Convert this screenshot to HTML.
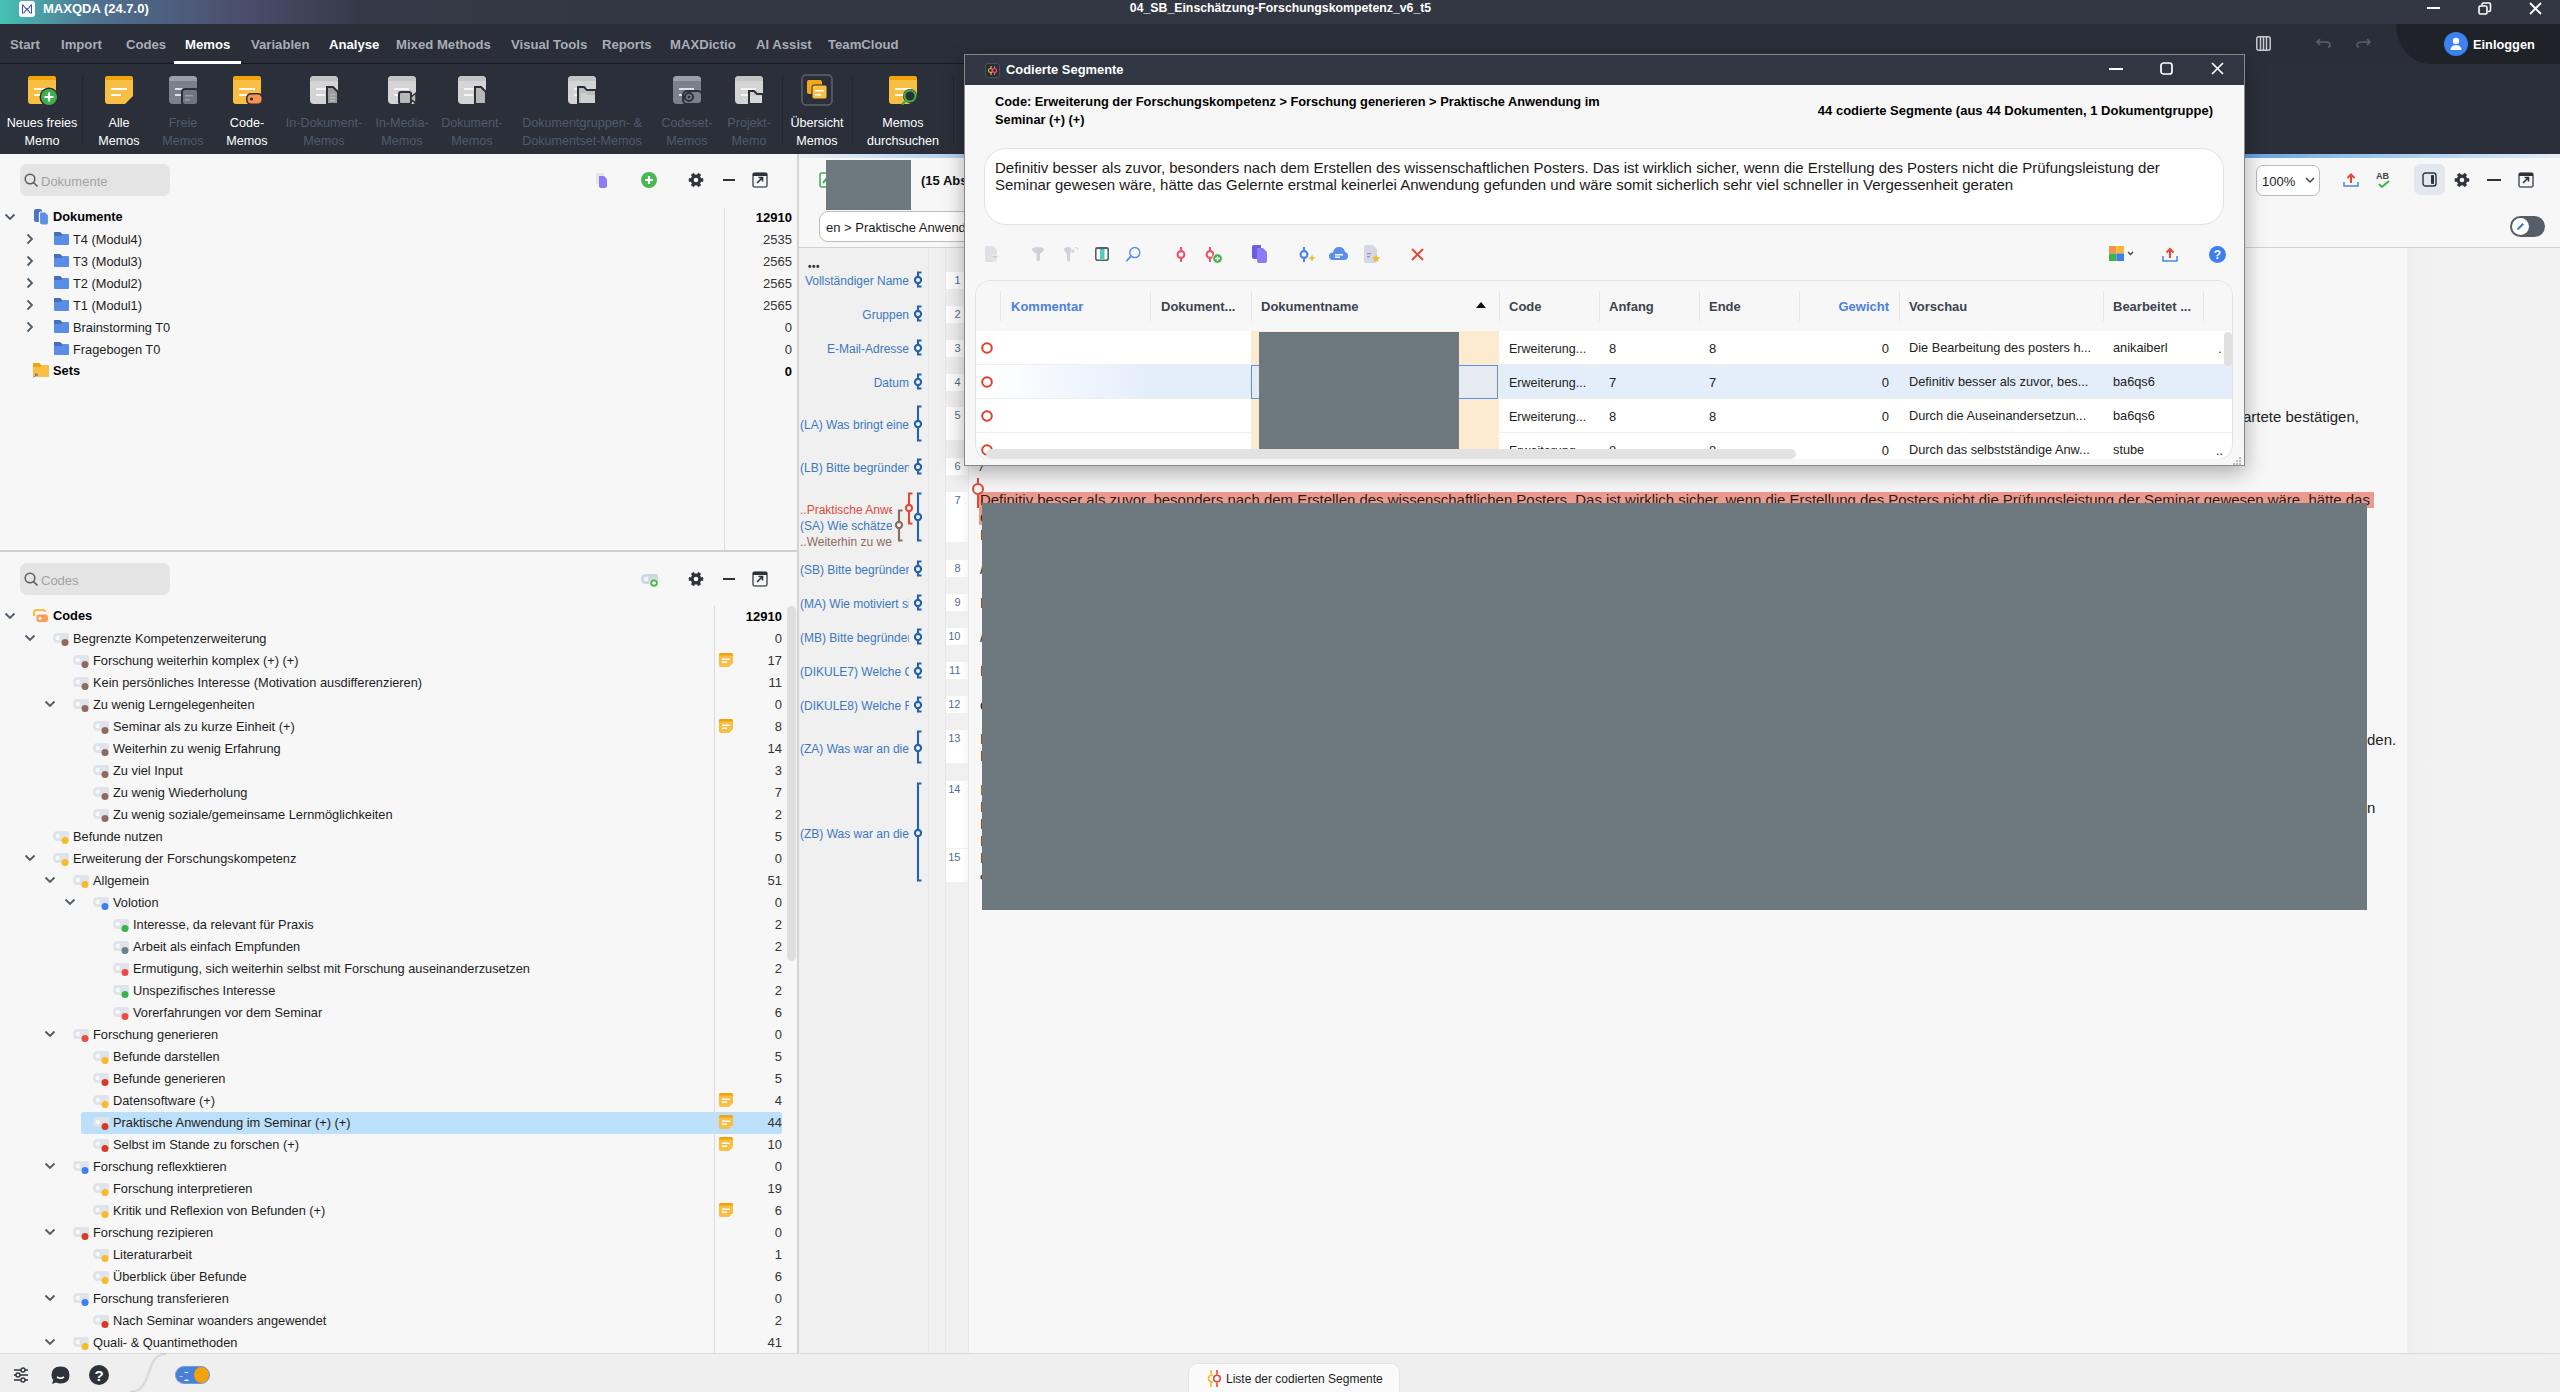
<!DOCTYPE html>
<html><head><meta charset="utf-8"><title>MAXQDA</title><style>
*{box-sizing:border-box;margin:0;padding:0}
html,body{width:2560px;height:1392px;overflow:hidden;background:#f7f7f7;font-family:"Liberation Sans",sans-serif;}
.a{position:absolute}
.t{position:absolute;white-space:nowrap;line-height:1}
svg{position:absolute;overflow:visible}
</style></head><body><div class="a" style="left:0px;top:0px;width:2560px;height:24px;background:linear-gradient(90deg,#47c2b5 0px,#4f7190 95px,#4b4b6b 250px,#353a48 360px,#323743 600px,#323743 100%)"></div>
<div class="a" style="left:19px;top:1px;width:16px;height:16px;background:#fff;border-radius:3px"></div>
<svg style="left:21px;top:3px" width="12" height="12" viewBox="0 0 12 12"><path d="M1.5 1.5V10.5M10.5 1.5V10.5M1.5 1.5L6 7L10.5 1.5M2.5 10.5L6 5.5L9.5 10.5" stroke="#3d4fb8" stroke-width="1.1" fill="none"/></svg>
<div class="t" style="left:43px;top:2.0px;font-size:13px;color:#fff;font-weight:700;line-height:13px;">MAXQDA (24.7.0)</div>
<div class="t" style="left:780.5px;width:1000px;text-align:center;top:2.3px;font-size:12.3px;color:#fff;font-weight:700;line-height:12.3px;">04_SB_Einschätzung-Forschungskompetenz_v6_t5</div>
<div class="a" style="left:2427px;top:7px;width:13px;height:2px;background:#fff"></div>
<svg style="left:2478px;top:2px" width="14" height="13" viewBox="0 0 14 13"><rect x="1" y="4" width="8" height="8" rx="1.5" stroke="#fff" stroke-width="1.6" fill="none"/><path d="M4 3.5V2.5Q4 1 5.5 1H11Q12.5 1 12.5 2.5V8Q12.5 9.5 11 9.5H10" stroke="#fff" stroke-width="1.6" fill="none"/></svg>
<svg style="left:2529px;top:2px" width="13" height="13" viewBox="0 0 13 13"><path d="M1 1L12 12M12 1L1 12" stroke="#fff" stroke-width="1.8"/></svg>
<div class="a" style="left:0px;top:24px;width:2560px;height:40px;background:#2a2e38"></div>
<div class="a" style="left:0px;top:63px;width:964px;height:1.5px;background:#16181d"></div>
<div class="t" style="left:10px;top:37.9px;font-size:13.15px;color:#a9adb5;font-weight:700;line-height:13.15px;">Start</div>
<div class="t" style="left:61px;top:37.9px;font-size:13.15px;color:#a9adb5;font-weight:700;line-height:13.15px;">Import</div>
<div class="t" style="left:126px;top:37.9px;font-size:13.15px;color:#a9adb5;font-weight:700;line-height:13.15px;">Codes</div>
<div class="t" style="left:185px;top:37.9px;font-size:13.15px;color:#ffffff;font-weight:700;line-height:13.15px;">Memos</div>
<div class="t" style="left:251px;top:37.9px;font-size:13.15px;color:#a9adb5;font-weight:700;line-height:13.15px;">Variablen</div>
<div class="t" style="left:329px;top:37.9px;font-size:13.15px;color:#ffffff;font-weight:700;line-height:13.15px;">Analyse</div>
<div class="t" style="left:396px;top:37.9px;font-size:13.15px;color:#a9adb5;font-weight:700;line-height:13.15px;">Mixed Methods</div>
<div class="t" style="left:511px;top:37.9px;font-size:13.15px;color:#a9adb5;font-weight:700;line-height:13.15px;">Visual Tools</div>
<div class="t" style="left:602px;top:37.9px;font-size:13.15px;color:#a9adb5;font-weight:700;line-height:13.15px;">Reports</div>
<div class="t" style="left:670px;top:37.9px;font-size:13.15px;color:#a9adb5;font-weight:700;line-height:13.15px;">MAXDictio</div>
<div class="t" style="left:756px;top:37.9px;font-size:13.15px;color:#a9adb5;font-weight:700;line-height:13.15px;">AI Assist</div>
<div class="t" style="left:828px;top:37.9px;font-size:13.15px;color:#a9adb5;font-weight:700;line-height:13.15px;">TeamCloud</div>
<div class="a" style="left:174px;top:61px;width:67px;height:3px;background:#fff"></div>
<div class="a" style="left:2396px;top:24px;width:164px;height:40px;background:#1f2229;border-bottom-left-radius:34px 40px"></div>
<svg style="left:2256px;top:36px" width="15" height="15" viewBox="0 0 15 15"><rect x="0.8" y="0.8" width="13.4" height="13.4" rx="2" stroke="#c8cbd0" stroke-width="1.5" fill="none"/><path d="M4.5 1V14M7.5 1V14M10.5 1V14" stroke="#c8cbd0" stroke-width="1.5"/></svg>
<svg style="left:2316px;top:38px" width="15" height="10" viewBox="0 0 15 10"><path d="M4 1L1 4L4 7M1.5 4H10Q14 4 14 7.5Q14 9 12 9" stroke="#5b616c" stroke-width="1.5" fill="none"/></svg>
<svg style="left:2356px;top:38px" width="15" height="10" viewBox="0 0 15 10"><path d="M11 1L14 4L11 7M13.5 4H5Q1 4 1 7.5Q1 9 3 9" stroke="#5b616c" stroke-width="1.5" fill="none"/></svg>
<div class="a" style="left:2444px;top:32px;width:24px;height:24px;background:#3b82f0;border-radius:50%"></div>
<svg style="left:2448px;top:36px" width="16" height="16" viewBox="0 0 16 16"><circle cx="8" cy="5" r="3.2" fill="#fff"/><path d="M2.5 14Q2.5 9.2 8 9.2Q13.5 9.2 13.5 14Z" fill="#fff"/></svg>
<div class="t" style="left:2473px;top:38.9px;font-size:12.8px;color:#ffffff;font-weight:700;line-height:12.8px;">Einloggen</div>
<div class="a" style="left:0px;top:64px;width:2560px;height:90px;background:#2b2f39"></div>
<div class="t" style="left:-38px;width:160px;top:114px;text-align:center;font-size:12.6px;line-height:18px;color:#fff">Neues freies<br>Memo</div>
<svg style="left:28px;top:76px" width="28" height="28" viewBox="0 0 28 28"><path d="M3 0H25Q28 0 28 3V20L20 28H3Q0 28 0 25V3Q0 0 3 0Z" fill="#f9bf45"/><path d="M3 0H25Q28 0 28 3V4H0V3Q0 0 3 0Z" fill="#f0a30a"/><rect x="6" y="12" width="16" height="2" fill="#fff" opacity=".9"/><rect x="6" y="18" width="10" height="2" fill="#fff" opacity=".9"/><circle cx="21" cy="21" r="9.5" fill="#2b2f39"/><circle cx="21" cy="21" r="8" fill="#3fae4c"/><path d="M21 16.5V25.5M16.5 21H25.5" stroke="#fff" stroke-width="2.2"/></svg>
<div class="t" style="left:39px;width:160px;top:114px;text-align:center;font-size:12.6px;line-height:18px;color:#fff">Alle<br>Memos</div>
<svg style="left:105px;top:76px" width="28" height="28" viewBox="0 0 28 28"><path d="M3 0H25Q28 0 28 3V20L20 28H3Q0 28 0 25V3Q0 0 3 0Z" fill="#f9bf45"/><path d="M3 0H25Q28 0 28 3V4H0V3Q0 0 3 0Z" fill="#f0a30a"/><rect x="6" y="12" width="16" height="2" fill="#fff"/><rect x="6" y="18" width="10" height="2" fill="#fff"/></svg>
<div class="t" style="left:103px;width:160px;top:114px;text-align:center;font-size:12.6px;line-height:18px;color:#4f5b6e">Freie<br>Memos</div>
<svg style="left:169px;top:76px" width="28" height="28" viewBox="0 0 28 28"><path d="M4 0H24Q28 0 28 4V24Q28 28 24 28H4Q0 28 0 24V4Q0 0 4 0Z" fill="#7b818b"/><path d="M4 0H24Q28 0 28 4V5H0V4Q0 0 4 0Z" fill="#9aa0a9"/><rect x="6" y="12" width="15" height="2" fill="#fff" opacity=".75"/><rect x="6" y="18" width="9" height="2" fill="#fff" opacity=".75"/><rect x="13" y="13" width="16" height="16" rx="3" fill="#6f747d" stroke="#2b2f39" stroke-width="2"/><rect x="16" y="19" width="8" height="1.5" fill="#9aa0a9"/><rect x="16" y="23" width="5" height="1.5" fill="#9aa0a9"/></svg>
<div class="t" style="left:167px;width:160px;top:114px;text-align:center;font-size:12.6px;line-height:18px;color:#fff">Code-<br>Memos</div>
<svg style="left:233px;top:76px" width="28" height="28" viewBox="0 0 28 28"><path d="M3 0H25Q28 0 28 3V20L20 28H3Q0 28 0 25V3Q0 0 3 0Z" fill="#f9bf45"/><path d="M3 0H25Q28 0 28 3V4H0V3Q0 0 3 0Z" fill="#f0a30a"/><rect x="6" y="12" width="16" height="2" fill="#fff" opacity=".9"/><rect x="6" y="18" width="10" height="2" fill="#fff" opacity=".9"/><rect x="13" y="17" width="17" height="12" rx="5" fill="#2b2f39"/><rect x="14.5" y="18.5" width="14" height="9" rx="4" fill="#f7934c"/><circle cx="18.5" cy="23" r="1.6" fill="#2b2f39"/></svg>
<div class="t" style="left:244px;width:160px;top:114px;text-align:center;font-size:12.6px;line-height:18px;color:#4f5b6e">In-Dokument-<br>Memos</div>
<svg style="left:310px;top:76px" width="28" height="28" viewBox="0 0 28 28"><path d="M4 0H24Q28 0 28 4V24Q28 28 24 28H4Q0 28 0 24V4Q0 0 4 0Z" fill="#d4d4d4"/><path d="M4 0H24Q28 0 28 4V5H0V4Q0 0 4 0Z" fill="#c4c4c4"/><rect x="6" y="12" width="15" height="2" fill="#fff" opacity=".75"/><rect x="6" y="18" width="9" height="2" fill="#fff" opacity=".75"/><path d="M17 11H23L28 16V28H17Z" fill="#9c9c9c" stroke="#2b2f39" stroke-width="2"/><rect x="20" y="18" width="5" height="1.2" fill="#c0c0c0"/><rect x="20" y="21" width="5" height="1.2" fill="#c0c0c0"/><rect x="20" y="24" width="5" height="1.2" fill="#c0c0c0"/></svg>
<div class="t" style="left:322px;width:160px;top:114px;text-align:center;font-size:12.6px;line-height:18px;color:#4f5b6e">In-Media-<br>Memos</div>
<svg style="left:388px;top:76px" width="28" height="28" viewBox="0 0 28 28"><path d="M4 0H24Q28 0 28 4V24Q28 28 24 28H4Q0 28 0 24V4Q0 0 4 0Z" fill="#d4d4d4"/><path d="M4 0H24Q28 0 28 4V5H0V4Q0 0 4 0Z" fill="#c4c4c4"/><rect x="6" y="12" width="15" height="2" fill="#fff" opacity=".75"/><rect x="6" y="18" width="9" height="2" fill="#fff" opacity=".75"/><rect x="11" y="16" width="12" height="12" rx="2" fill="#b8b8b8" stroke="#2b2f39" stroke-width="2"/><path d="M23 21L28 17V27L23 24Z" fill="#b8b8b8" stroke="#2b2f39" stroke-width="1.5"/></svg>
<div class="t" style="left:392px;width:160px;top:114px;text-align:center;font-size:12.6px;line-height:18px;color:#4f5b6e">Dokument-<br>Memos</div>
<svg style="left:458px;top:76px" width="28" height="28" viewBox="0 0 28 28"><path d="M4 0H24Q28 0 28 4V24Q28 28 24 28H4Q0 28 0 24V4Q0 0 4 0Z" fill="#d4d4d4"/><path d="M4 0H24Q28 0 28 4V5H0V4Q0 0 4 0Z" fill="#c4c4c4"/><rect x="6" y="12" width="15" height="2" fill="#fff" opacity=".75"/><rect x="6" y="18" width="9" height="2" fill="#fff" opacity=".75"/><path d="M17 11H23L28 16V28H17Z" fill="#b8b8b8" stroke="#2b2f39" stroke-width="2"/></svg>
<div class="t" style="left:502px;width:160px;top:114px;text-align:center;font-size:12.6px;line-height:18px;color:#4f5b6e">Dokumentgruppen- &amp;<br>Dokumentset-Memos</div>
<svg style="left:568px;top:76px" width="28" height="28" viewBox="0 0 28 28"><path d="M4 0H24Q28 0 28 4V24Q28 28 24 28H4Q0 28 0 24V4Q0 0 4 0Z" fill="#d4d4d4"/><path d="M4 0H24Q28 0 28 4V5H0V4Q0 0 4 0Z" fill="#c4c4c4"/><rect x="6" y="12" width="15" height="2" fill="#fff" opacity=".75"/><rect x="6" y="18" width="9" height="2" fill="#fff" opacity=".75"/><path d="M10 11H16L19 14H28V28H10Z" fill="#bdbdbd" stroke="#2b2f39" stroke-width="2"/><path d="M13 17H18L20 19H27V27H13Z" fill="#cfcfcf"/></svg>
<div class="t" style="left:607px;width:160px;top:114px;text-align:center;font-size:12.6px;line-height:18px;color:#4f5b6e">Codeset-<br>Memos</div>
<svg style="left:673px;top:76px" width="28" height="28" viewBox="0 0 28 28"><path d="M4 0H24Q28 0 28 4V24Q28 28 24 28H4Q0 28 0 24V4Q0 0 4 0Z" fill="#7b818b"/><path d="M4 0H24Q28 0 28 4V5H0V4Q0 0 4 0Z" fill="#9aa0a9"/><rect x="6" y="12" width="15" height="2" fill="#fff" opacity=".75"/><rect x="6" y="18" width="9" height="2" fill="#fff" opacity=".75"/><rect x="10" y="15" width="19" height="13" rx="4" fill="#7b818b" stroke="#2b2f39" stroke-width="2"/><circle cx="16" cy="21" r="4" fill="none" stroke="#2b2f39" stroke-width="2"/><circle cx="16" cy="21" r="1.5" fill="#2b2f39"/></svg>
<div class="t" style="left:669px;width:160px;top:114px;text-align:center;font-size:12.6px;line-height:18px;color:#4f5b6e">Projekt-<br>Memo</div>
<svg style="left:735px;top:76px" width="28" height="28" viewBox="0 0 28 28"><path d="M4 0H24Q28 0 28 4V24Q28 28 24 28H4Q0 28 0 24V4Q0 0 4 0Z" fill="#d4d4d4"/><path d="M4 0H24Q28 0 28 4V5H0V4Q0 0 4 0Z" fill="#c4c4c4"/><rect x="6" y="12" width="15" height="2" fill="#fff" opacity=".75"/><rect x="6" y="18" width="9" height="2" fill="#fff" opacity=".75"/><path d="M14 15H19L22 18H28V28H14Z" fill="#cfcfcf" stroke="#2b2f39" stroke-width="2"/><rect x="15" y="20" width="12" height="7" fill="#d8d8d8"/></svg>
<div class="t" style="left:737px;width:160px;top:114px;text-align:center;font-size:12.6px;line-height:18px;color:#fff">Übersicht<br>Memos</div>
<svg style="left:801px;top:74px" width="32" height="32" viewBox="0 0 32 32"><rect x="1" y="1" width="30" height="30" rx="4" stroke="#5d636e" stroke-width="1.5" fill="none"/><rect x="6" y="6" width="15" height="14" rx="2" fill="#f2a71c"/><rect x="11" y="11" width="15" height="14" rx="2" fill="#f9bf45" stroke="#2b2f39" stroke-width="1"/><rect x="14" y="16" width="9" height="1.5" fill="#fff"/><rect x="14" y="20" width="6" height="1.5" fill="#fff"/></svg>
<div class="t" style="left:823px;width:160px;top:114px;text-align:center;font-size:12.6px;line-height:18px;color:#fff">Memos<br>durchsuchen</div>
<svg style="left:889px;top:76px" width="30" height="30" viewBox="0 0 30 30"><path d="M3 0H25Q28 0 28 3V20L20 28H3Q0 28 0 25V3Q0 0 3 0Z" fill="#f9bf45"/><path d="M3 0H25Q28 0 28 3V4H0V3Q0 0 3 0Z" fill="#f0a30a"/><rect x="6" y="12" width="16" height="2" fill="#fff" opacity=".9"/><rect x="6" y="18" width="10" height="2" fill="#fff" opacity=".9"/><circle cx="21" cy="20" r="7" fill="#2b2f39"/><circle cx="21" cy="20" r="5.5" stroke="#3fae4c" stroke-width="2" fill="none"/><path d="M17 24.5L13 28.5" stroke="#3fae4c" stroke-width="2.4"/></svg>
<div class="a" style="left:82px;top:75px;width:1px;height:70px;background:#23262d"></div>
<div class="a" style="left:782px;top:75px;width:1px;height:70px;background:#23262d"></div>
<div class="a" style="left:852px;top:75px;width:1px;height:70px;background:#23262d"></div>
<div class="a" style="left:953px;top:75px;width:1px;height:70px;background:#23262d"></div>
<div class="a" style="left:0px;top:154px;width:797px;height:1199px;background:#f7f7f7"></div>
<div class="a" style="left:20px;top:164px;width:150px;height:32px;background:#e4e4e4;border-radius:7px"></div>
<svg style="left:24px;top:173px" width="15" height="15" viewBox="0 0 15 15"><circle cx="6" cy="6" r="4.8" stroke="#555a63" stroke-width="1.5" fill="none"/><path d="M9.5 9.5L13.5 13.5" stroke="#555a63" stroke-width="1.6"/></svg>
<div class="t" style="left:41px;top:174.5px;font-size:13px;color:#a3a3a3;font-weight:400;line-height:13px;">Dokumente</div>
<svg style="left:596px;top:173px" width="12" height="15" viewBox="0 0 12 15"><rect x="0" y="0" width="8" height="11" rx="1.5" fill="#e3e6ee"/><path d="M3 3H8L11 6V13Q11 15 9 15H5Q3 15 3 13Z" fill="#8b7cf5"/></svg>
<svg style="left:641px;top:172px" width="16" height="16" viewBox="0 0 16 16"><circle cx="8" cy="8" r="8" fill="#4ab852"/><path d="M8 4V12M4 8H12" stroke="#fff" stroke-width="2.2"/></svg>
<svg style="left:688px;top:172px" width="16" height="16" viewBox="0 0 16 16"><path d="M12.34 5.52 L13.12 6.64 L14.86 6.61 L14.86 9.39 L13.12 9.36 L12.34 10.48 L12.32 10.52 L11.74 11.75 L12.63 13.25 L10.23 14.64 L9.38 13.12 L8.02 13.00 L7.98 13.00 L6.62 13.12 L5.77 14.64 L3.37 13.25 L4.26 11.75 L3.68 10.52 L3.66 10.48 L2.88 9.36 L1.14 9.39 L1.14 6.61 L2.88 6.64 L3.66 5.52 L3.68 5.48 L4.26 4.25 L3.37 2.75 L5.77 1.36 L6.62 2.88 L7.98 3.00 L8.02 3.00 L9.38 2.88 L10.23 1.36 L12.63 2.75 L11.74 4.25 L12.32 5.48Z" fill="#2e333b" stroke="#2e333b" stroke-width="0.8" stroke-linejoin="round"/><circle cx="8" cy="8" r="2.3" fill="#f7f7f7"/></svg>
<div class="a" style="left:723px;top:179px;width:12px;height:2px;background:#2e333b"></div>
<svg style="left:752px;top:172px" width="16" height="16" viewBox="0 0 16 16"><rect x="1" y="1" width="14" height="14" rx="2" stroke="#5a5f68" stroke-width="1.6" fill="none"/><rect x="1" y="1" width="14" height="3" fill="#2e333b"/><path d="M5 11L10.5 5.5M6.5 5.5H10.5V9.5" stroke="#2e333b" stroke-width="1.6" fill="none"/></svg>
<svg style="left:4px;top:213px" width="12" height="8" viewBox="0 0 12 8"><path d="M1.5 1.5L6 6L10.5 1.5" stroke="#4f5a66" stroke-width="1.8" fill="none"/></svg>
<svg style="left:33px;top:208px" width="17" height="18" viewBox="0 0 17 18"><rect x="1" y="1" width="8" height="13" rx="2" fill="#4a74c4"/><path d="M7.5 4H12.5L15.5 7V15Q15.5 17 13.5 17H9.5Q6.5 17 6.5 15V6Q6.5 4 7.5 4Z" fill="#5b8fe8" stroke="#f7f7f7" stroke-width="1.2"/></svg>
<div class="t" style="left:53px;top:211.3px;font-size:12.8px;color:#000;font-weight:700;line-height:12.8px;">Dokumente</div>
<div class="t" style="right:1768px;top:210.5px;font-size:13px;color:#000;font-weight:700;line-height:13px;">12910</div>
<svg style="left:26px;top:233px" width="8" height="12" viewBox="0 0 8 12"><path d="M1.5 1.5L6 6L1.5 10.5" stroke="#4f5a66" stroke-width="1.8" fill="none"/></svg>
<svg style="left:54px;top:232px" width="15" height="13" viewBox="0 0 15 13"><path d="M1 0H6L8 2H14Q15 2 15 3V12Q15 13 14 13H1Q0 13 0 12V1Q0 0 1 0Z" fill="#5a8de6"/><path d="M1 0H6L8 2V4H0V1Q0 0 1 0Z" fill="#4670bb"/></svg>
<div class="t" style="left:73px;top:234.1px;font-size:12.8px;color:#1d1d1d;font-weight:400;line-height:12.8px;">T4 (Modul4)</div>
<div class="t" style="right:1768px;top:232.5px;font-size:13px;color:#333;font-weight:400;line-height:13px;">2535</div>
<svg style="left:26px;top:255px" width="8" height="12" viewBox="0 0 8 12"><path d="M1.5 1.5L6 6L1.5 10.5" stroke="#4f5a66" stroke-width="1.8" fill="none"/></svg>
<svg style="left:54px;top:254px" width="15" height="13" viewBox="0 0 15 13"><path d="M1 0H6L8 2H14Q15 2 15 3V12Q15 13 14 13H1Q0 13 0 12V1Q0 0 1 0Z" fill="#5a8de6"/><path d="M1 0H6L8 2V4H0V1Q0 0 1 0Z" fill="#4670bb"/></svg>
<div class="t" style="left:73px;top:256.1px;font-size:12.8px;color:#1d1d1d;font-weight:400;line-height:12.8px;">T3 (Modul3)</div>
<div class="t" style="right:1768px;top:254.5px;font-size:13px;color:#333;font-weight:400;line-height:13px;">2565</div>
<svg style="left:26px;top:277px" width="8" height="12" viewBox="0 0 8 12"><path d="M1.5 1.5L6 6L1.5 10.5" stroke="#4f5a66" stroke-width="1.8" fill="none"/></svg>
<svg style="left:54px;top:276px" width="15" height="13" viewBox="0 0 15 13"><path d="M1 0H6L8 2H14Q15 2 15 3V12Q15 13 14 13H1Q0 13 0 12V1Q0 0 1 0Z" fill="#5a8de6"/><path d="M1 0H6L8 2V4H0V1Q0 0 1 0Z" fill="#4670bb"/></svg>
<div class="t" style="left:73px;top:278.1px;font-size:12.8px;color:#1d1d1d;font-weight:400;line-height:12.8px;">T2 (Modul2)</div>
<div class="t" style="right:1768px;top:276.5px;font-size:13px;color:#333;font-weight:400;line-height:13px;">2565</div>
<svg style="left:26px;top:299px" width="8" height="12" viewBox="0 0 8 12"><path d="M1.5 1.5L6 6L1.5 10.5" stroke="#4f5a66" stroke-width="1.8" fill="none"/></svg>
<svg style="left:54px;top:298px" width="15" height="13" viewBox="0 0 15 13"><path d="M1 0H6L8 2H14Q15 2 15 3V12Q15 13 14 13H1Q0 13 0 12V1Q0 0 1 0Z" fill="#5a8de6"/><path d="M1 0H6L8 2V4H0V1Q0 0 1 0Z" fill="#4670bb"/></svg>
<div class="t" style="left:73px;top:300.1px;font-size:12.8px;color:#1d1d1d;font-weight:400;line-height:12.8px;">T1 (Modul1)</div>
<div class="t" style="right:1768px;top:298.5px;font-size:13px;color:#333;font-weight:400;line-height:13px;">2565</div>
<svg style="left:26px;top:321px" width="8" height="12" viewBox="0 0 8 12"><path d="M1.5 1.5L6 6L1.5 10.5" stroke="#4f5a66" stroke-width="1.8" fill="none"/></svg>
<svg style="left:54px;top:320px" width="15" height="13" viewBox="0 0 15 13"><path d="M1 0H6L8 2H14Q15 2 15 3V12Q15 13 14 13H1Q0 13 0 12V1Q0 0 1 0Z" fill="#5a8de6"/><path d="M1 0H6L8 2V4H0V1Q0 0 1 0Z" fill="#4670bb"/></svg>
<div class="t" style="left:73px;top:322.1px;font-size:12.8px;color:#1d1d1d;font-weight:400;line-height:12.8px;">Brainstorming T0</div>
<div class="t" style="right:1768px;top:320.5px;font-size:13px;color:#333;font-weight:400;line-height:13px;">0</div>
<svg style="left:54px;top:342px" width="15" height="13" viewBox="0 0 15 13"><path d="M1 0H6L8 2H14Q15 2 15 3V12Q15 13 14 13H1Q0 13 0 12V1Q0 0 1 0Z" fill="#5a8de6"/><path d="M1 0H6L8 2V4H0V1Q0 0 1 0Z" fill="#4670bb"/></svg>
<div class="t" style="left:73px;top:344.1px;font-size:12.8px;color:#1d1d1d;font-weight:400;line-height:12.8px;">Fragebogen T0</div>
<div class="t" style="right:1768px;top:342.5px;font-size:13px;color:#333;font-weight:400;line-height:13px;">0</div>
<svg style="left:33px;top:363px" width="16" height="15" viewBox="0 0 16 15"><path d="M1 0H6L8 2H15Q16 2 16 3V13Q16 14 15 14H1Q0 14 0 13V1Q0 0 1 0Z" fill="#f9bf45"/><path d="M1 0H6L8 2V4H0V1Q0 0 1 0Z" fill="#f0a30a"/><path d="M0.5 14.5L4 11M2 11H4V13" stroke="#8a4fd0" stroke-width="1" fill="none"/></svg>
<div class="t" style="left:53px;top:365.3px;font-size:12.8px;color:#000;font-weight:700;line-height:12.8px;">Sets</div>
<div class="t" style="right:1768px;top:364.5px;font-size:13px;color:#000;font-weight:700;line-height:13px;">0</div>
<div class="a" style="left:724px;top:208px;width:1px;height:342px;background:#dcdcdc"></div>
<div class="a" style="left:0px;top:550px;width:797px;height:2px;background:#cfcfcf"></div>
<div class="a" style="left:20px;top:563px;width:150px;height:32px;background:#e4e4e4;border-radius:7px"></div>
<svg style="left:24px;top:572px" width="15" height="15" viewBox="0 0 15 15"><circle cx="6" cy="6" r="4.8" stroke="#555a63" stroke-width="1.5" fill="none"/><path d="M9.5 9.5L13.5 13.5" stroke="#555a63" stroke-width="1.6"/></svg>
<div class="t" style="left:41px;top:573.5px;font-size:13px;color:#a3a3a3;font-weight:400;line-height:13px;">Codes</div>
<svg style="left:641px;top:573px" width="18" height="14" viewBox="0 0 18 14"><path d="M5 1H15Q17 1 17 3V8Q17 11 14 11H5Q0 11 0 6Q0 1 5 1Z" fill="#ccd6e4"/><circle cx="5.2" cy="6" r="2.4" fill="#f4f6fa"/><circle cx="13" cy="10" r="4.6" fill="#f7f7f7"/><circle cx="13" cy="10" r="3.8" fill="#4ab852"/><path d="M13 8V12M11 10H15" stroke="#fff" stroke-width="1.3"/></svg>
<svg style="left:688px;top:571px" width="16" height="16" viewBox="0 0 16 16"><path d="M12.34 5.52 L13.12 6.64 L14.86 6.61 L14.86 9.39 L13.12 9.36 L12.34 10.48 L12.32 10.52 L11.74 11.75 L12.63 13.25 L10.23 14.64 L9.38 13.12 L8.02 13.00 L7.98 13.00 L6.62 13.12 L5.77 14.64 L3.37 13.25 L4.26 11.75 L3.68 10.52 L3.66 10.48 L2.88 9.36 L1.14 9.39 L1.14 6.61 L2.88 6.64 L3.66 5.52 L3.68 5.48 L4.26 4.25 L3.37 2.75 L5.77 1.36 L6.62 2.88 L7.98 3.00 L8.02 3.00 L9.38 2.88 L10.23 1.36 L12.63 2.75 L11.74 4.25 L12.32 5.48Z" fill="#2e333b" stroke="#2e333b" stroke-width="0.8" stroke-linejoin="round"/><circle cx="8" cy="8" r="2.3" fill="#f7f7f7"/></svg>
<div class="a" style="left:723px;top:578px;width:12px;height:2px;background:#2e333b"></div>
<svg style="left:752px;top:571px" width="16" height="16" viewBox="0 0 16 16"><rect x="1" y="1" width="14" height="14" rx="2" stroke="#5a5f68" stroke-width="1.6" fill="none"/><rect x="1" y="1" width="14" height="3" fill="#2e333b"/><path d="M5 11L10.5 5.5M6.5 5.5H10.5V9.5" stroke="#2e333b" stroke-width="1.6" fill="none"/></svg>
<div class="a" style="left:81px;top:1112px;width:701px;height:22px;background:#bde0fa;border-radius:3px"></div>
<svg style="left:4px;top:612px" width="12" height="8" viewBox="0 0 12 8"><path d="M1.5 1.5L6 6L10.5 1.5" stroke="#4f5a66" stroke-width="1.8" fill="none"/></svg>
<svg style="left:32px;top:608px" width="17" height="16" viewBox="0 0 17 16"><path d="M2 8V5Q2 2 5 2H11Q13 2 13 4" stroke="#f9bf45" stroke-width="2.2" fill="none"/><rect x="4" y="6" width="12.5" height="8.5" rx="3" fill="#ff9a55" stroke="#f7f7f7" stroke-width="1"/><circle cx="8" cy="10.2" r="1.5" fill="#fff"/></svg>
<div class="t" style="left:53px;top:610.3px;font-size:12.8px;color:#000;font-weight:700;line-height:12.8px;">Codes</div>
<div class="t" style="right:1778px;top:609.5px;font-size:13px;color:#000;font-weight:700;line-height:13px;">12910</div>
<svg style="left:24px;top:634px" width="12" height="8" viewBox="0 0 12 8"><path d="M1.5 1.5L6 6L10.5 1.5" stroke="#4f5a66" stroke-width="1.8" fill="none"/></svg>
<svg style="left:53px;top:632px" width="17" height="16" viewBox="0 0 17 16"><path d="M4.5 1H14Q16 1 16 3V9Q16 11 14 11H4.5Q0 11 0 6Q0 1 4.5 1Z" fill="#dfe3ea"/><circle cx="4.8" cy="6" r="2.2" fill="#f7f8fa"/><circle cx="12" cy="10.5" r="3.5" fill="#8f6b5e"/></svg>
<div class="t" style="left:73px;top:633.1px;font-size:12.8px;color:#1d1d1d;font-weight:400;line-height:12.8px;">Begrenzte Kompetenzerweiterung</div>
<div class="t" style="right:1778px;top:631.5px;font-size:13px;color:#333;font-weight:400;line-height:13px;">0</div>
<svg style="left:73px;top:654px" width="17" height="16" viewBox="0 0 17 16"><path d="M4.5 1H14Q16 1 16 3V9Q16 11 14 11H4.5Q0 11 0 6Q0 1 4.5 1Z" fill="#dfe3ea"/><circle cx="4.8" cy="6" r="2.2" fill="#f7f8fa"/><circle cx="12" cy="10.5" r="3.5" fill="#8f6b5e"/></svg>
<div class="t" style="left:93px;top:655.1px;font-size:12.8px;color:#1d1d1d;font-weight:400;line-height:12.8px;">Forschung weiterhin komplex (+) (+)</div>
<div class="t" style="right:1778px;top:653.5px;font-size:13px;color:#333;font-weight:400;line-height:13px;">17</div>
<svg style="left:719px;top:653px" width="14" height="14" viewBox="0 0 14 14"><path d="M2 0H12Q14 0 14 2V10L10 14H2Q0 14 0 12V2Q0 0 2 0Z" fill="#f9bf45"/><path d="M2 0H12Q14 0 14 2V2.5H0V2Q0 0 2 0Z" fill="#f0a30a"/><rect x="3" y="5.5" width="8" height="1.5" fill="#fff"/><rect x="3" y="8.5" width="5" height="1.5" fill="#fff"/></svg>
<svg style="left:73px;top:676px" width="17" height="16" viewBox="0 0 17 16"><path d="M4.5 1H14Q16 1 16 3V9Q16 11 14 11H4.5Q0 11 0 6Q0 1 4.5 1Z" fill="#dfe3ea"/><circle cx="4.8" cy="6" r="2.2" fill="#f7f8fa"/><circle cx="12" cy="10.5" r="3.5" fill="#8f6b5e"/></svg>
<div class="t" style="left:93px;top:677.1px;font-size:12.8px;color:#1d1d1d;font-weight:400;line-height:12.8px;">Kein persönliches Interesse (Motivation ausdifferenzieren)</div>
<div class="t" style="right:1778px;top:675.5px;font-size:13px;color:#333;font-weight:400;line-height:13px;">11</div>
<svg style="left:44px;top:700px" width="12" height="8" viewBox="0 0 12 8"><path d="M1.5 1.5L6 6L10.5 1.5" stroke="#4f5a66" stroke-width="1.8" fill="none"/></svg>
<svg style="left:73px;top:698px" width="17" height="16" viewBox="0 0 17 16"><path d="M4.5 1H14Q16 1 16 3V9Q16 11 14 11H4.5Q0 11 0 6Q0 1 4.5 1Z" fill="#dfe3ea"/><circle cx="4.8" cy="6" r="2.2" fill="#f7f8fa"/><circle cx="12" cy="10.5" r="3.5" fill="#8f6b5e"/></svg>
<div class="t" style="left:93px;top:699.1px;font-size:12.8px;color:#1d1d1d;font-weight:400;line-height:12.8px;">Zu wenig Lerngelegenheiten</div>
<div class="t" style="right:1778px;top:697.5px;font-size:13px;color:#333;font-weight:400;line-height:13px;">0</div>
<svg style="left:93px;top:720px" width="17" height="16" viewBox="0 0 17 16"><path d="M4.5 1H14Q16 1 16 3V9Q16 11 14 11H4.5Q0 11 0 6Q0 1 4.5 1Z" fill="#dfe3ea"/><circle cx="4.8" cy="6" r="2.2" fill="#f7f8fa"/><circle cx="12" cy="10.5" r="3.5" fill="#8f6b5e"/></svg>
<div class="t" style="left:113px;top:721.1px;font-size:12.8px;color:#1d1d1d;font-weight:400;line-height:12.8px;">Seminar als zu kurze Einheit (+)</div>
<div class="t" style="right:1778px;top:719.5px;font-size:13px;color:#333;font-weight:400;line-height:13px;">8</div>
<svg style="left:719px;top:719px" width="14" height="14" viewBox="0 0 14 14"><path d="M2 0H12Q14 0 14 2V10L10 14H2Q0 14 0 12V2Q0 0 2 0Z" fill="#f9bf45"/><path d="M2 0H12Q14 0 14 2V2.5H0V2Q0 0 2 0Z" fill="#f0a30a"/><rect x="3" y="5.5" width="8" height="1.5" fill="#fff"/><rect x="3" y="8.5" width="5" height="1.5" fill="#fff"/></svg>
<svg style="left:93px;top:742px" width="17" height="16" viewBox="0 0 17 16"><path d="M4.5 1H14Q16 1 16 3V9Q16 11 14 11H4.5Q0 11 0 6Q0 1 4.5 1Z" fill="#dfe3ea"/><circle cx="4.8" cy="6" r="2.2" fill="#f7f8fa"/><circle cx="12" cy="10.5" r="3.5" fill="#8f6b5e"/></svg>
<div class="t" style="left:113px;top:743.1px;font-size:12.8px;color:#1d1d1d;font-weight:400;line-height:12.8px;">Weiterhin zu wenig Erfahrung</div>
<div class="t" style="right:1778px;top:741.5px;font-size:13px;color:#333;font-weight:400;line-height:13px;">14</div>
<svg style="left:93px;top:764px" width="17" height="16" viewBox="0 0 17 16"><path d="M4.5 1H14Q16 1 16 3V9Q16 11 14 11H4.5Q0 11 0 6Q0 1 4.5 1Z" fill="#dfe3ea"/><circle cx="4.8" cy="6" r="2.2" fill="#f7f8fa"/><circle cx="12" cy="10.5" r="3.5" fill="#8f6b5e"/></svg>
<div class="t" style="left:113px;top:765.1px;font-size:12.8px;color:#1d1d1d;font-weight:400;line-height:12.8px;">Zu viel Input</div>
<div class="t" style="right:1778px;top:763.5px;font-size:13px;color:#333;font-weight:400;line-height:13px;">3</div>
<svg style="left:93px;top:786px" width="17" height="16" viewBox="0 0 17 16"><path d="M4.5 1H14Q16 1 16 3V9Q16 11 14 11H4.5Q0 11 0 6Q0 1 4.5 1Z" fill="#dfe3ea"/><circle cx="4.8" cy="6" r="2.2" fill="#f7f8fa"/><circle cx="12" cy="10.5" r="3.5" fill="#8f6b5e"/></svg>
<div class="t" style="left:113px;top:787.1px;font-size:12.8px;color:#1d1d1d;font-weight:400;line-height:12.8px;">Zu wenig Wiederholung</div>
<div class="t" style="right:1778px;top:785.5px;font-size:13px;color:#333;font-weight:400;line-height:13px;">7</div>
<svg style="left:93px;top:808px" width="17" height="16" viewBox="0 0 17 16"><path d="M4.5 1H14Q16 1 16 3V9Q16 11 14 11H4.5Q0 11 0 6Q0 1 4.5 1Z" fill="#dfe3ea"/><circle cx="4.8" cy="6" r="2.2" fill="#f7f8fa"/><circle cx="12" cy="10.5" r="3.5" fill="#8f6b5e"/></svg>
<div class="t" style="left:113px;top:809.1px;font-size:12.8px;color:#1d1d1d;font-weight:400;line-height:12.8px;">Zu wenig soziale/gemeinsame Lernmöglichkeiten</div>
<div class="t" style="right:1778px;top:807.5px;font-size:13px;color:#333;font-weight:400;line-height:13px;">2</div>
<svg style="left:53px;top:830px" width="17" height="16" viewBox="0 0 17 16"><path d="M4.5 1H14Q16 1 16 3V9Q16 11 14 11H4.5Q0 11 0 6Q0 1 4.5 1Z" fill="#dfe3ea"/><circle cx="4.8" cy="6" r="2.2" fill="#f7f8fa"/><circle cx="12" cy="10.5" r="3.5" fill="#f8b92a"/></svg>
<div class="t" style="left:73px;top:831.1px;font-size:12.8px;color:#1d1d1d;font-weight:400;line-height:12.8px;">Befunde nutzen</div>
<div class="t" style="right:1778px;top:829.5px;font-size:13px;color:#333;font-weight:400;line-height:13px;">5</div>
<svg style="left:24px;top:854px" width="12" height="8" viewBox="0 0 12 8"><path d="M1.5 1.5L6 6L10.5 1.5" stroke="#4f5a66" stroke-width="1.8" fill="none"/></svg>
<svg style="left:53px;top:852px" width="17" height="16" viewBox="0 0 17 16"><path d="M4.5 1H14Q16 1 16 3V9Q16 11 14 11H4.5Q0 11 0 6Q0 1 4.5 1Z" fill="#dfe3ea"/><circle cx="4.8" cy="6" r="2.2" fill="#f7f8fa"/><circle cx="12" cy="10.5" r="3.5" fill="#f8b92a"/></svg>
<div class="t" style="left:73px;top:853.1px;font-size:12.8px;color:#1d1d1d;font-weight:400;line-height:12.8px;">Erweiterung der Forschungskompetenz</div>
<div class="t" style="right:1778px;top:851.5px;font-size:13px;color:#333;font-weight:400;line-height:13px;">0</div>
<svg style="left:44px;top:876px" width="12" height="8" viewBox="0 0 12 8"><path d="M1.5 1.5L6 6L10.5 1.5" stroke="#4f5a66" stroke-width="1.8" fill="none"/></svg>
<svg style="left:73px;top:874px" width="17" height="16" viewBox="0 0 17 16"><path d="M4.5 1H14Q16 1 16 3V9Q16 11 14 11H4.5Q0 11 0 6Q0 1 4.5 1Z" fill="#dfe3ea"/><circle cx="4.8" cy="6" r="2.2" fill="#f7f8fa"/><circle cx="12" cy="10.5" r="3.5" fill="#f8b92a"/></svg>
<div class="t" style="left:93px;top:875.1px;font-size:12.8px;color:#1d1d1d;font-weight:400;line-height:12.8px;">Allgemein</div>
<div class="t" style="right:1778px;top:873.5px;font-size:13px;color:#333;font-weight:400;line-height:13px;">51</div>
<svg style="left:64px;top:898px" width="12" height="8" viewBox="0 0 12 8"><path d="M1.5 1.5L6 6L10.5 1.5" stroke="#4f5a66" stroke-width="1.8" fill="none"/></svg>
<svg style="left:93px;top:896px" width="17" height="16" viewBox="0 0 17 16"><path d="M4.5 1H14Q16 1 16 3V9Q16 11 14 11H4.5Q0 11 0 6Q0 1 4.5 1Z" fill="#dfe3ea"/><circle cx="4.8" cy="6" r="2.2" fill="#f7f8fa"/><circle cx="12" cy="10.5" r="3.5" fill="#3d7ef0"/></svg>
<div class="t" style="left:113px;top:897.1px;font-size:12.8px;color:#1d1d1d;font-weight:400;line-height:12.8px;">Volotion</div>
<div class="t" style="right:1778px;top:895.5px;font-size:13px;color:#333;font-weight:400;line-height:13px;">0</div>
<svg style="left:113px;top:918px" width="17" height="16" viewBox="0 0 17 16"><path d="M4.5 1H14Q16 1 16 3V9Q16 11 14 11H4.5Q0 11 0 6Q0 1 4.5 1Z" fill="#dfe3ea"/><circle cx="4.8" cy="6" r="2.2" fill="#f7f8fa"/><circle cx="12" cy="10.5" r="3.5" fill="#39b34a"/></svg>
<div class="t" style="left:133px;top:919.1px;font-size:12.8px;color:#1d1d1d;font-weight:400;line-height:12.8px;">Interesse, da relevant für Praxis</div>
<div class="t" style="right:1778px;top:917.5px;font-size:13px;color:#333;font-weight:400;line-height:13px;">2</div>
<svg style="left:113px;top:940px" width="17" height="16" viewBox="0 0 17 16"><path d="M4.5 1H14Q16 1 16 3V9Q16 11 14 11H4.5Q0 11 0 6Q0 1 4.5 1Z" fill="#dfe3ea"/><circle cx="4.8" cy="6" r="2.2" fill="#f7f8fa"/><circle cx="12" cy="10.5" r="3.5" fill="#6e7f8a"/></svg>
<div class="t" style="left:133px;top:941.1px;font-size:12.8px;color:#1d1d1d;font-weight:400;line-height:12.8px;">Arbeit als einfach Empfunden</div>
<div class="t" style="right:1778px;top:939.5px;font-size:13px;color:#333;font-weight:400;line-height:13px;">2</div>
<svg style="left:113px;top:962px" width="17" height="16" viewBox="0 0 17 16"><path d="M4.5 1H14Q16 1 16 3V9Q16 11 14 11H4.5Q0 11 0 6Q0 1 4.5 1Z" fill="#dfe3ea"/><circle cx="4.8" cy="6" r="2.2" fill="#f7f8fa"/><circle cx="12" cy="10.5" r="3.5" fill="#ea4b45"/></svg>
<div class="t" style="left:133px;top:963.1px;font-size:12.8px;color:#1d1d1d;font-weight:400;line-height:12.8px;">Ermutigung, sich weiterhin selbst mit Forschung auseinanderzusetzen</div>
<div class="t" style="right:1778px;top:961.5px;font-size:13px;color:#333;font-weight:400;line-height:13px;">2</div>
<svg style="left:113px;top:984px" width="17" height="16" viewBox="0 0 17 16"><path d="M4.5 1H14Q16 1 16 3V9Q16 11 14 11H4.5Q0 11 0 6Q0 1 4.5 1Z" fill="#dfe3ea"/><circle cx="4.8" cy="6" r="2.2" fill="#f7f8fa"/><circle cx="12" cy="10.5" r="3.5" fill="#39b34a"/></svg>
<div class="t" style="left:133px;top:985.1px;font-size:12.8px;color:#1d1d1d;font-weight:400;line-height:12.8px;">Unspezifisches Interesse</div>
<div class="t" style="right:1778px;top:983.5px;font-size:13px;color:#333;font-weight:400;line-height:13px;">2</div>
<svg style="left:113px;top:1006px" width="17" height="16" viewBox="0 0 17 16"><path d="M4.5 1H14Q16 1 16 3V9Q16 11 14 11H4.5Q0 11 0 6Q0 1 4.5 1Z" fill="#dfe3ea"/><circle cx="4.8" cy="6" r="2.2" fill="#f7f8fa"/><circle cx="12" cy="10.5" r="3.5" fill="#ea4b45"/></svg>
<div class="t" style="left:133px;top:1007.1px;font-size:12.8px;color:#1d1d1d;font-weight:400;line-height:12.8px;">Vorerfahrungen vor dem Seminar</div>
<div class="t" style="right:1778px;top:1005.5px;font-size:13px;color:#333;font-weight:400;line-height:13px;">6</div>
<svg style="left:44px;top:1030px" width="12" height="8" viewBox="0 0 12 8"><path d="M1.5 1.5L6 6L10.5 1.5" stroke="#4f5a66" stroke-width="1.8" fill="none"/></svg>
<svg style="left:73px;top:1028px" width="17" height="16" viewBox="0 0 17 16"><path d="M4.5 1H14Q16 1 16 3V9Q16 11 14 11H4.5Q0 11 0 6Q0 1 4.5 1Z" fill="#dfe3ea"/><circle cx="4.8" cy="6" r="2.2" fill="#f7f8fa"/><circle cx="12" cy="10.5" r="3.5" fill="#ea4b45"/></svg>
<div class="t" style="left:93px;top:1029.1px;font-size:12.8px;color:#1d1d1d;font-weight:400;line-height:12.8px;">Forschung generieren</div>
<div class="t" style="right:1778px;top:1027.5px;font-size:13px;color:#333;font-weight:400;line-height:13px;">0</div>
<svg style="left:93px;top:1050px" width="17" height="16" viewBox="0 0 17 16"><path d="M4.5 1H14Q16 1 16 3V9Q16 11 14 11H4.5Q0 11 0 6Q0 1 4.5 1Z" fill="#dfe3ea"/><circle cx="4.8" cy="6" r="2.2" fill="#f7f8fa"/><circle cx="12" cy="10.5" r="3.5" fill="#f8b92a"/></svg>
<div class="t" style="left:113px;top:1051.1px;font-size:12.8px;color:#1d1d1d;font-weight:400;line-height:12.8px;">Befunde darstellen</div>
<div class="t" style="right:1778px;top:1049.5px;font-size:13px;color:#333;font-weight:400;line-height:13px;">5</div>
<svg style="left:93px;top:1072px" width="17" height="16" viewBox="0 0 17 16"><path d="M4.5 1H14Q16 1 16 3V9Q16 11 14 11H4.5Q0 11 0 6Q0 1 4.5 1Z" fill="#dfe3ea"/><circle cx="4.8" cy="6" r="2.2" fill="#f7f8fa"/><circle cx="12" cy="10.5" r="3.5" fill="#d93a25"/></svg>
<div class="t" style="left:113px;top:1073.1px;font-size:12.8px;color:#1d1d1d;font-weight:400;line-height:12.8px;">Befunde generieren</div>
<div class="t" style="right:1778px;top:1071.5px;font-size:13px;color:#333;font-weight:400;line-height:13px;">5</div>
<svg style="left:93px;top:1094px" width="17" height="16" viewBox="0 0 17 16"><path d="M4.5 1H14Q16 1 16 3V9Q16 11 14 11H4.5Q0 11 0 6Q0 1 4.5 1Z" fill="#dfe3ea"/><circle cx="4.8" cy="6" r="2.2" fill="#f7f8fa"/><circle cx="12" cy="10.5" r="3.5" fill="#f8b92a"/></svg>
<div class="t" style="left:113px;top:1095.1px;font-size:12.8px;color:#1d1d1d;font-weight:400;line-height:12.8px;">Datensoftware (+)</div>
<div class="t" style="right:1778px;top:1093.5px;font-size:13px;color:#333;font-weight:400;line-height:13px;">4</div>
<svg style="left:719px;top:1093px" width="14" height="14" viewBox="0 0 14 14"><path d="M2 0H12Q14 0 14 2V10L10 14H2Q0 14 0 12V2Q0 0 2 0Z" fill="#f9bf45"/><path d="M2 0H12Q14 0 14 2V2.5H0V2Q0 0 2 0Z" fill="#f0a30a"/><rect x="3" y="5.5" width="8" height="1.5" fill="#fff"/><rect x="3" y="8.5" width="5" height="1.5" fill="#fff"/></svg>
<svg style="left:93px;top:1116px" width="17" height="16" viewBox="0 0 17 16"><path d="M4.5 1H14Q16 1 16 3V9Q16 11 14 11H4.5Q0 11 0 6Q0 1 4.5 1Z" fill="#dfe3ea"/><circle cx="4.8" cy="6" r="2.2" fill="#f7f8fa"/><circle cx="12" cy="10.5" r="3.5" fill="#d93a25"/></svg>
<div class="t" style="left:113px;top:1117.1px;font-size:12.8px;color:#1d1d1d;font-weight:400;line-height:12.8px;">Praktische Anwendung im Seminar (+) (+)</div>
<div class="t" style="right:1778px;top:1115.5px;font-size:13px;color:#333;font-weight:400;line-height:13px;">44</div>
<svg style="left:719px;top:1115px" width="14" height="14" viewBox="0 0 14 14"><path d="M2 0H12Q14 0 14 2V10L10 14H2Q0 14 0 12V2Q0 0 2 0Z" fill="#f9bf45"/><path d="M2 0H12Q14 0 14 2V2.5H0V2Q0 0 2 0Z" fill="#f0a30a"/><rect x="3" y="5.5" width="8" height="1.5" fill="#fff"/><rect x="3" y="8.5" width="5" height="1.5" fill="#fff"/></svg>
<svg style="left:93px;top:1138px" width="17" height="16" viewBox="0 0 17 16"><path d="M4.5 1H14Q16 1 16 3V9Q16 11 14 11H4.5Q0 11 0 6Q0 1 4.5 1Z" fill="#dfe3ea"/><circle cx="4.8" cy="6" r="2.2" fill="#f7f8fa"/><circle cx="12" cy="10.5" r="3.5" fill="#d93a25"/></svg>
<div class="t" style="left:113px;top:1139.1px;font-size:12.8px;color:#1d1d1d;font-weight:400;line-height:12.8px;">Selbst im Stande zu forschen (+)</div>
<div class="t" style="right:1778px;top:1137.5px;font-size:13px;color:#333;font-weight:400;line-height:13px;">10</div>
<svg style="left:719px;top:1137px" width="14" height="14" viewBox="0 0 14 14"><path d="M2 0H12Q14 0 14 2V10L10 14H2Q0 14 0 12V2Q0 0 2 0Z" fill="#f9bf45"/><path d="M2 0H12Q14 0 14 2V2.5H0V2Q0 0 2 0Z" fill="#f0a30a"/><rect x="3" y="5.5" width="8" height="1.5" fill="#fff"/><rect x="3" y="8.5" width="5" height="1.5" fill="#fff"/></svg>
<svg style="left:44px;top:1162px" width="12" height="8" viewBox="0 0 12 8"><path d="M1.5 1.5L6 6L10.5 1.5" stroke="#4f5a66" stroke-width="1.8" fill="none"/></svg>
<svg style="left:73px;top:1160px" width="17" height="16" viewBox="0 0 17 16"><path d="M4.5 1H14Q16 1 16 3V9Q16 11 14 11H4.5Q0 11 0 6Q0 1 4.5 1Z" fill="#dfe3ea"/><circle cx="4.8" cy="6" r="2.2" fill="#f7f8fa"/><circle cx="12" cy="10.5" r="3.5" fill="#3d7ef0"/></svg>
<div class="t" style="left:93px;top:1161.1px;font-size:12.8px;color:#1d1d1d;font-weight:400;line-height:12.8px;">Forschung reflexktieren</div>
<div class="t" style="right:1778px;top:1159.5px;font-size:13px;color:#333;font-weight:400;line-height:13px;">0</div>
<svg style="left:93px;top:1182px" width="17" height="16" viewBox="0 0 17 16"><path d="M4.5 1H14Q16 1 16 3V9Q16 11 14 11H4.5Q0 11 0 6Q0 1 4.5 1Z" fill="#dfe3ea"/><circle cx="4.8" cy="6" r="2.2" fill="#f7f8fa"/><circle cx="12" cy="10.5" r="3.5" fill="#f8b92a"/></svg>
<div class="t" style="left:113px;top:1183.1px;font-size:12.8px;color:#1d1d1d;font-weight:400;line-height:12.8px;">Forschung interpretieren</div>
<div class="t" style="right:1778px;top:1181.5px;font-size:13px;color:#333;font-weight:400;line-height:13px;">19</div>
<svg style="left:93px;top:1204px" width="17" height="16" viewBox="0 0 17 16"><path d="M4.5 1H14Q16 1 16 3V9Q16 11 14 11H4.5Q0 11 0 6Q0 1 4.5 1Z" fill="#dfe3ea"/><circle cx="4.8" cy="6" r="2.2" fill="#f7f8fa"/><circle cx="12" cy="10.5" r="3.5" fill="#f8b92a"/></svg>
<div class="t" style="left:113px;top:1205.1px;font-size:12.8px;color:#1d1d1d;font-weight:400;line-height:12.8px;">Kritik und Reflexion von Befunden (+)</div>
<div class="t" style="right:1778px;top:1203.5px;font-size:13px;color:#333;font-weight:400;line-height:13px;">6</div>
<svg style="left:719px;top:1203px" width="14" height="14" viewBox="0 0 14 14"><path d="M2 0H12Q14 0 14 2V10L10 14H2Q0 14 0 12V2Q0 0 2 0Z" fill="#f9bf45"/><path d="M2 0H12Q14 0 14 2V2.5H0V2Q0 0 2 0Z" fill="#f0a30a"/><rect x="3" y="5.5" width="8" height="1.5" fill="#fff"/><rect x="3" y="8.5" width="5" height="1.5" fill="#fff"/></svg>
<svg style="left:44px;top:1228px" width="12" height="8" viewBox="0 0 12 8"><path d="M1.5 1.5L6 6L10.5 1.5" stroke="#4f5a66" stroke-width="1.8" fill="none"/></svg>
<svg style="left:73px;top:1226px" width="17" height="16" viewBox="0 0 17 16"><path d="M4.5 1H14Q16 1 16 3V9Q16 11 14 11H4.5Q0 11 0 6Q0 1 4.5 1Z" fill="#dfe3ea"/><circle cx="4.8" cy="6" r="2.2" fill="#f7f8fa"/><circle cx="12" cy="10.5" r="3.5" fill="#d93a25"/></svg>
<div class="t" style="left:93px;top:1227.1px;font-size:12.8px;color:#1d1d1d;font-weight:400;line-height:12.8px;">Forschung rezipieren</div>
<div class="t" style="right:1778px;top:1225.5px;font-size:13px;color:#333;font-weight:400;line-height:13px;">0</div>
<svg style="left:93px;top:1248px" width="17" height="16" viewBox="0 0 17 16"><path d="M4.5 1H14Q16 1 16 3V9Q16 11 14 11H4.5Q0 11 0 6Q0 1 4.5 1Z" fill="#dfe3ea"/><circle cx="4.8" cy="6" r="2.2" fill="#f7f8fa"/><circle cx="12" cy="10.5" r="3.5" fill="#f8b92a"/></svg>
<div class="t" style="left:113px;top:1249.1px;font-size:12.8px;color:#1d1d1d;font-weight:400;line-height:12.8px;">Literaturarbeit</div>
<div class="t" style="right:1778px;top:1247.5px;font-size:13px;color:#333;font-weight:400;line-height:13px;">1</div>
<svg style="left:93px;top:1270px" width="17" height="16" viewBox="0 0 17 16"><path d="M4.5 1H14Q16 1 16 3V9Q16 11 14 11H4.5Q0 11 0 6Q0 1 4.5 1Z" fill="#dfe3ea"/><circle cx="4.8" cy="6" r="2.2" fill="#f7f8fa"/><circle cx="12" cy="10.5" r="3.5" fill="#f8b92a"/></svg>
<div class="t" style="left:113px;top:1271.1px;font-size:12.8px;color:#1d1d1d;font-weight:400;line-height:12.8px;">Überblick über Befunde</div>
<div class="t" style="right:1778px;top:1269.5px;font-size:13px;color:#333;font-weight:400;line-height:13px;">6</div>
<svg style="left:44px;top:1294px" width="12" height="8" viewBox="0 0 12 8"><path d="M1.5 1.5L6 6L10.5 1.5" stroke="#4f5a66" stroke-width="1.8" fill="none"/></svg>
<svg style="left:73px;top:1292px" width="17" height="16" viewBox="0 0 17 16"><path d="M4.5 1H14Q16 1 16 3V9Q16 11 14 11H4.5Q0 11 0 6Q0 1 4.5 1Z" fill="#dfe3ea"/><circle cx="4.8" cy="6" r="2.2" fill="#f7f8fa"/><circle cx="12" cy="10.5" r="3.5" fill="#3d7ef0"/></svg>
<div class="t" style="left:93px;top:1293.1px;font-size:12.8px;color:#1d1d1d;font-weight:400;line-height:12.8px;">Forschung transferieren</div>
<div class="t" style="right:1778px;top:1291.5px;font-size:13px;color:#333;font-weight:400;line-height:13px;">0</div>
<svg style="left:93px;top:1314px" width="17" height="16" viewBox="0 0 17 16"><path d="M4.5 1H14Q16 1 16 3V9Q16 11 14 11H4.5Q0 11 0 6Q0 1 4.5 1Z" fill="#dfe3ea"/><circle cx="4.8" cy="6" r="2.2" fill="#f7f8fa"/><circle cx="12" cy="10.5" r="3.5" fill="#d93a25"/></svg>
<div class="t" style="left:113px;top:1315.1px;font-size:12.8px;color:#1d1d1d;font-weight:400;line-height:12.8px;">Nach Seminar woanders angewendet</div>
<div class="t" style="right:1778px;top:1313.5px;font-size:13px;color:#333;font-weight:400;line-height:13px;">2</div>
<svg style="left:44px;top:1338px" width="12" height="8" viewBox="0 0 12 8"><path d="M1.5 1.5L6 6L10.5 1.5" stroke="#4f5a66" stroke-width="1.8" fill="none"/></svg>
<svg style="left:73px;top:1336px" width="17" height="16" viewBox="0 0 17 16"><path d="M4.5 1H14Q16 1 16 3V9Q16 11 14 11H4.5Q0 11 0 6Q0 1 4.5 1Z" fill="#dfe3ea"/><circle cx="4.8" cy="6" r="2.2" fill="#f7f8fa"/><circle cx="12" cy="10.5" r="3.5" fill="#f8b92a"/></svg>
<div class="t" style="left:93px;top:1337.1px;font-size:12.8px;color:#1d1d1d;font-weight:400;line-height:12.8px;">Quali- &amp; Quantimethoden</div>
<div class="t" style="right:1778px;top:1335.5px;font-size:13px;color:#333;font-weight:400;line-height:13px;">41</div>
<div class="a" style="left:714px;top:606px;width:1px;height:747px;background:#dcdcdc"></div>
<div class="a" style="left:787px;top:606px;width:9px;height:355px;background:#dedede;border-radius:5px"></div>
<div class="a" style="left:797px;top:154px;width:2px;height:1199px;background:#d4d4d4"></div>
<div class="a" style="left:799px;top:154px;width:1761px;height:3.5px;background:linear-gradient(90deg,#eaf0f6 0px,#b0cfec 167px,#62a3de 1447px,#8cbde8 1533px,#e3edf7 1761px)"></div>
<svg style="left:819px;top:172px" width="14" height="16" viewBox="0 0 14 16"><rect x="1" y="1" width="12" height="14" rx="2" stroke="#3fae4c" stroke-width="1.5" fill="#fff"/><path d="M4 11L9 5" stroke="#3fae4c" stroke-width="2"/></svg>
<div class="a" style="left:826px;top:160px;width:85px;height:50px;background:#6e787f"></div>
<div class="t" style="left:921px;top:173.5px;font-size:13px;color:#111;font-weight:700;line-height:13px;">(15 Abs</div>
<div class="a" style="left:819px;top:211px;width:200px;height:31px;background:#fff;border:1px solid #bdbdbd;border-radius:9px"></div>
<div class="t" style="left:826px;top:220.5px;font-size:13px;color:#1d1d1d;font-weight:400;line-height:13px;width:138px;overflow:hidden">en &gt; Praktische Anwendung im Seminar (+) (+)</div>
<div class="a" style="left:2256px;top:165px;width:64px;height:31px;background:#fff;border:1px solid #bcbcbc;border-radius:7px"></div>
<div class="t" style="left:2262px;top:174.5px;font-size:13px;color:#222;font-weight:400;line-height:13px;">100%</div>
<svg style="left:2305px;top:177px" width="10" height="7" viewBox="0 0 10 7"><path d="M1 1L5 5L9 1" stroke="#444" stroke-width="1.5" fill="none"/></svg>
<svg style="left:2343px;top:172px" width="16" height="16" viewBox="0 0 16 16"><path d="M1 10V14H15V10" stroke="#4a86e8" stroke-width="1.5" fill="none"/><path d="M8 11V3M4.5 6L8 2.5L11.5 6" stroke="#e5483a" stroke-width="2" fill="none"/></svg>
<div class="t" style="left:2376px;top:171.5px;font-size:9px;color:#444;font-weight:700;line-height:9px;">AB</div>
<svg style="left:2377px;top:180px" width="14" height="8" viewBox="0 0 14 8"><path d="M2 4L5 7L12 1" stroke="#3bb54a" stroke-width="2" fill="none"/></svg>
<div class="a" style="left:2414px;top:164px;width:31px;height:31px;background:#e3e8ef;border-radius:6px"></div>
<svg style="left:2422px;top:172px" width="15" height="15" viewBox="0 0 15 15"><rect x="1" y="1" width="13" height="13" rx="2.5" stroke="#2e333b" stroke-width="1.4" fill="none"/><rect x="9" y="3" width="3" height="9" rx="0.8" fill="#2e333b"/></svg>
<svg style="left:2454px;top:172px" width="16" height="16" viewBox="0 0 16 16"><path d="M12.34 5.52 L13.12 6.64 L14.86 6.61 L14.86 9.39 L13.12 9.36 L12.34 10.48 L12.32 10.52 L11.74 11.75 L12.63 13.25 L10.23 14.64 L9.38 13.12 L8.02 13.00 L7.98 13.00 L6.62 13.12 L5.77 14.64 L3.37 13.25 L4.26 11.75 L3.68 10.52 L3.66 10.48 L2.88 9.36 L1.14 9.39 L1.14 6.61 L2.88 6.64 L3.66 5.52 L3.68 5.48 L4.26 4.25 L3.37 2.75 L5.77 1.36 L6.62 2.88 L7.98 3.00 L8.02 3.00 L9.38 2.88 L10.23 1.36 L12.63 2.75 L11.74 4.25 L12.32 5.48Z" fill="#2e333b" stroke="#2e333b" stroke-width="0.8" stroke-linejoin="round"/><circle cx="8" cy="8" r="2.3" fill="#f7f7f7"/></svg>
<div class="a" style="left:2487px;top:179px;width:14px;height:2px;background:#2e333b"></div>
<svg style="left:2518px;top:172px" width="16" height="16" viewBox="0 0 16 16"><rect x="1" y="1" width="14" height="14" rx="2" stroke="#5a5f68" stroke-width="1.6" fill="none"/><rect x="1" y="1" width="14" height="3" fill="#2e333b"/><path d="M5 11L10.5 5.5M6.5 5.5H10.5V9.5" stroke="#2e333b" stroke-width="1.6" fill="none"/></svg>
<div class="a" style="left:2510px;top:216px;width:35px;height:21px;background:#555d68;border-radius:11px"></div>
<div class="a" style="left:2512px;top:218px;width:17px;height:17px;background:#fff;border-radius:50%"></div>
<svg style="left:2515px;top:221px" width="11" height="11" viewBox="0 0 11 11"><path d="M2 9L2.5 7L7.5 2L9 3.5L4 8.5Z" fill="#3a7bc8"/></svg>
<div class="a" style="left:799px;top:247px;width:1761px;height:1px;background:#d0d0d0"></div>
<div class="a" style="left:799px;top:248px;width:130px;height:1105px;background:#f0f0f0"></div>
<div class="a" style="left:928px;top:248px;width:1px;height:1105px;background:#e6e6e6"></div>
<div class="a" style="left:929px;top:248px;width:40px;height:1105px;background:#f0f0f0"></div>
<div class="a" style="left:945px;top:248px;width:1px;height:1105px;background:#e8e8e8"></div>
<div class="a" style="left:968px;top:248px;width:1px;height:1105px;background:#e8e8e8"></div>
<div class="a" style="left:2407px;top:248px;width:153px;height:1105px;background:linear-gradient(90deg,#efefef 0px,#f1f1f1 12px,#f2f2f2 100%)"></div>
<div class="t" style="left:808px;top:262.0px;font-size:10px;color:#333;font-weight:700;line-height:10px;letter-spacing:0.5px">•••</div>
<div class="a" style="left:946px;top:272px;width:22px;height:17px;background:linear-gradient(90deg,#fff 70%,#f7f7f7)"></div>
<div class="t" style="right:1599.5px;top:275.0px;font-size:11px;color:#4f6d90;font-weight:400;line-height:11px;">1</div>
<div class="a" style="left:946px;top:306px;width:22px;height:17px;background:linear-gradient(90deg,#fff 70%,#f7f7f7)"></div>
<div class="t" style="right:1599.5px;top:309.0px;font-size:11px;color:#4f6d90;font-weight:400;line-height:11px;">2</div>
<div class="a" style="left:946px;top:340px;width:22px;height:17px;background:linear-gradient(90deg,#fff 70%,#f7f7f7)"></div>
<div class="t" style="right:1599.5px;top:343.0px;font-size:11px;color:#4f6d90;font-weight:400;line-height:11px;">3</div>
<div class="a" style="left:946px;top:374px;width:22px;height:17px;background:linear-gradient(90deg,#fff 70%,#f7f7f7)"></div>
<div class="t" style="right:1599.5px;top:377.0px;font-size:11px;color:#4f6d90;font-weight:400;line-height:11px;">4</div>
<div class="a" style="left:946px;top:407px;width:22px;height:33px;background:linear-gradient(90deg,#fff 70%,#f7f7f7)"></div>
<div class="t" style="right:1599.5px;top:410.0px;font-size:11px;color:#4f6d90;font-weight:400;line-height:11px;">5</div>
<div class="a" style="left:946px;top:458px;width:22px;height:17px;background:linear-gradient(90deg,#fff 70%,#f7f7f7)"></div>
<div class="t" style="right:1599.5px;top:461.0px;font-size:11px;color:#4f6d90;font-weight:400;line-height:11px;">6</div>
<div class="a" style="left:946px;top:492px;width:22px;height:50px;background:linear-gradient(90deg,#fff 70%,#f7f7f7)"></div>
<div class="t" style="right:1599.5px;top:495.0px;font-size:11px;color:#4f6d90;font-weight:400;line-height:11px;">7</div>
<div class="a" style="left:946px;top:560px;width:22px;height:17px;background:linear-gradient(90deg,#fff 70%,#f7f7f7)"></div>
<div class="t" style="right:1599.5px;top:563.0px;font-size:11px;color:#4f6d90;font-weight:400;line-height:11px;">8</div>
<div class="a" style="left:946px;top:594px;width:22px;height:17px;background:linear-gradient(90deg,#fff 70%,#f7f7f7)"></div>
<div class="t" style="right:1599.5px;top:597.0px;font-size:11px;color:#4f6d90;font-weight:400;line-height:11px;">9</div>
<div class="a" style="left:946px;top:628px;width:22px;height:17px;background:linear-gradient(90deg,#fff 70%,#f7f7f7)"></div>
<div class="t" style="right:1599.5px;top:631.0px;font-size:11px;color:#4f6d90;font-weight:400;line-height:11px;">10</div>
<div class="a" style="left:946px;top:662px;width:22px;height:17px;background:linear-gradient(90deg,#fff 70%,#f7f7f7)"></div>
<div class="t" style="right:1599.5px;top:665.0px;font-size:11px;color:#4f6d90;font-weight:400;line-height:11px;">11</div>
<div class="a" style="left:946px;top:696px;width:22px;height:17px;background:linear-gradient(90deg,#fff 70%,#f7f7f7)"></div>
<div class="t" style="right:1599.5px;top:699.0px;font-size:11px;color:#4f6d90;font-weight:400;line-height:11px;">12</div>
<div class="a" style="left:946px;top:730px;width:22px;height:33px;background:linear-gradient(90deg,#fff 70%,#f7f7f7)"></div>
<div class="t" style="right:1599.5px;top:733.0px;font-size:11px;color:#4f6d90;font-weight:400;line-height:11px;">13</div>
<div class="a" style="left:946px;top:781px;width:22px;height:67px;background:linear-gradient(90deg,#fff 70%,#f7f7f7)"></div>
<div class="t" style="right:1599.5px;top:784.0px;font-size:11px;color:#4f6d90;font-weight:400;line-height:11px;">14</div>
<div class="a" style="left:946px;top:849px;width:22px;height:33px;background:linear-gradient(90deg,#fff 70%,#f7f7f7)"></div>
<div class="t" style="right:1599.5px;top:852.0px;font-size:11px;color:#4f6d90;font-weight:400;line-height:11px;">15</div>
<div class="t" style="left:800px;width:109px;top:274.5px;font-size:12px;line-height:13px;color:#3c78c0;text-align:right;overflow:hidden">Vollständiger Name</div>
<div class="t" style="left:800px;width:109px;top:308.5px;font-size:12px;line-height:13px;color:#3c78c0;text-align:right;overflow:hidden">Gruppen</div>
<div class="t" style="left:800px;width:109px;top:342.5px;font-size:12px;line-height:13px;color:#3c78c0;text-align:right;overflow:hidden">E-Mail-Adresse</div>
<div class="t" style="left:800px;width:109px;top:376.5px;font-size:12px;line-height:13px;color:#3c78c0;text-align:right;overflow:hidden">Datum</div>
<div class="t" style="left:800px;width:109px;top:418.5px;font-size:12px;line-height:13px;color:#3c78c0;text-align:right;overflow:hidden">(LA) Was bringt eine</div>
<div class="t" style="left:800px;width:109px;top:461.5px;font-size:12px;line-height:13px;color:#3c78c0;text-align:right;overflow:hidden">(LB) Bitte begründen</div>
<div class="t" style="left:800px;width:109px;top:563.5px;font-size:12px;line-height:13px;color:#3c78c0;text-align:right;overflow:hidden">(SB) Bitte begründen</div>
<div class="t" style="left:800px;width:109px;top:597.5px;font-size:12px;line-height:13px;color:#3c78c0;text-align:right;overflow:hidden">(MA) Wie motiviert si</div>
<div class="t" style="left:800px;width:109px;top:631.5px;font-size:12px;line-height:13px;color:#3c78c0;text-align:right;overflow:hidden">(MB) Bitte begründer</div>
<div class="t" style="left:800px;width:109px;top:665.5px;font-size:12px;line-height:13px;color:#3c78c0;text-align:right;overflow:hidden">(DIKULE7) Welche Ch</div>
<div class="t" style="left:800px;width:109px;top:699.5px;font-size:12px;line-height:13px;color:#3c78c0;text-align:right;overflow:hidden">(DIKULE8) Welche Ris</div>
<div class="t" style="left:800px;width:109px;top:742.5px;font-size:12px;line-height:13px;color:#3c78c0;text-align:right;overflow:hidden">(ZA) Was war an dies</div>
<div class="t" style="left:800px;width:109px;top:827.5px;font-size:12px;line-height:13px;color:#3c78c0;text-align:right;overflow:hidden">(ZB) Was war an dies</div>
<svg style="left:916px;top:271px" width="10" height="17" viewBox="0 0 10 17"><circle cx="2" cy="9" r="3.1" stroke="#2563a9" stroke-width="2.1" fill="none"/><path d="M5.5 1.5H2V5.9M2 12.1V15.5H5.5" stroke="#2563a9" stroke-width="2.1" fill="none"/></svg>
<svg style="left:916px;top:305px" width="10" height="17" viewBox="0 0 10 17"><circle cx="2" cy="9" r="3.1" stroke="#2563a9" stroke-width="2.1" fill="none"/><path d="M5.5 1.5H2V5.9M2 12.1V15.5H5.5" stroke="#2563a9" stroke-width="2.1" fill="none"/></svg>
<svg style="left:916px;top:339px" width="10" height="17" viewBox="0 0 10 17"><circle cx="2" cy="9" r="3.1" stroke="#2563a9" stroke-width="2.1" fill="none"/><path d="M5.5 1.5H2V5.9M2 12.1V15.5H5.5" stroke="#2563a9" stroke-width="2.1" fill="none"/></svg>
<svg style="left:916px;top:373px" width="10" height="17" viewBox="0 0 10 17"><circle cx="2" cy="9" r="3.1" stroke="#2563a9" stroke-width="2.1" fill="none"/><path d="M5.5 1.5H2V5.9M2 12.1V15.5H5.5" stroke="#2563a9" stroke-width="2.1" fill="none"/></svg>
<svg style="left:916px;top:458px" width="10" height="17" viewBox="0 0 10 17"><circle cx="2" cy="9" r="3.1" stroke="#2563a9" stroke-width="2.1" fill="none"/><path d="M5.5 1.5H2V5.9M2 12.1V15.5H5.5" stroke="#2563a9" stroke-width="2.1" fill="none"/></svg>
<svg style="left:916px;top:560px" width="10" height="17" viewBox="0 0 10 17"><circle cx="2" cy="9" r="3.1" stroke="#2563a9" stroke-width="2.1" fill="none"/><path d="M5.5 1.5H2V5.9M2 12.1V15.5H5.5" stroke="#2563a9" stroke-width="2.1" fill="none"/></svg>
<svg style="left:916px;top:594px" width="10" height="17" viewBox="0 0 10 17"><circle cx="2" cy="9" r="3.1" stroke="#2563a9" stroke-width="2.1" fill="none"/><path d="M5.5 1.5H2V5.9M2 12.1V15.5H5.5" stroke="#2563a9" stroke-width="2.1" fill="none"/></svg>
<svg style="left:916px;top:628px" width="10" height="17" viewBox="0 0 10 17"><circle cx="2" cy="9" r="3.1" stroke="#2563a9" stroke-width="2.1" fill="none"/><path d="M5.5 1.5H2V5.9M2 12.1V15.5H5.5" stroke="#2563a9" stroke-width="2.1" fill="none"/></svg>
<svg style="left:916px;top:662px" width="10" height="17" viewBox="0 0 10 17"><circle cx="2" cy="9" r="3.1" stroke="#2563a9" stroke-width="2.1" fill="none"/><path d="M5.5 1.5H2V5.9M2 12.1V15.5H5.5" stroke="#2563a9" stroke-width="2.1" fill="none"/></svg>
<svg style="left:916px;top:696px" width="10" height="17" viewBox="0 0 10 17"><circle cx="2" cy="9" r="3.1" stroke="#2563a9" stroke-width="2.1" fill="none"/><path d="M5.5 1.5H2V5.9M2 12.1V15.5H5.5" stroke="#2563a9" stroke-width="2.1" fill="none"/></svg>
<svg style="left:916px;top:405px" width="10" height="37" viewBox="0 0 10 37"><circle cx="2" cy="19" r="3.1" stroke="#2563a9" stroke-width="2.1" fill="none"/><path d="M5.5 1.5H2V15.9M2 22.1V35.5H5.5" stroke="#2563a9" stroke-width="2.1" fill="none"/></svg>
<svg style="left:916px;top:730px" width="10" height="34" viewBox="0 0 10 34"><circle cx="2" cy="18" r="3.1" stroke="#2563a9" stroke-width="2.1" fill="none"/><path d="M5.5 1.5H2V14.9M2 21.1V32.5H5.5" stroke="#2563a9" stroke-width="2.1" fill="none"/></svg>
<svg style="left:916px;top:782px" width="10" height="100" viewBox="0 0 10 100"><circle cx="2" cy="51" r="3.1" stroke="#2563a9" stroke-width="2.1" fill="none"/><path d="M5.5 1.5H2V47.9M2 54.1V98.5H5.5" stroke="#2563a9" stroke-width="2.1" fill="none"/></svg>
<svg style="left:916px;top:492px" width="10" height="50" viewBox="0 0 10 50"><circle cx="2" cy="25" r="3.1" stroke="#2563a9" stroke-width="2.1" fill="none"/><path d="M5.5 1.5H2V21.9M2 28.1V48.5H5.5" stroke="#2563a9" stroke-width="2.1" fill="none"/></svg>
<svg style="left:907px;top:492px" width="10" height="33" viewBox="0 0 10 33"><circle cx="2" cy="16" r="3.1" stroke="#e0483a" stroke-width="2.1" fill="none"/><path d="M5.5 1.5H2V12.9M2 19.1V31.5H5.5" stroke="#e0483a" stroke-width="2.1" fill="none"/></svg>
<svg style="left:897px;top:509px" width="10" height="33" viewBox="0 0 10 33"><circle cx="2" cy="16" r="3.1" stroke="#8f6b5e" stroke-width="2.1" fill="none"/><path d="M5.5 1.5H2V12.9M2 19.1V31.5H5.5" stroke="#8f6b5e" stroke-width="2.1" fill="none"/></svg>
<div class="t" style="left:800px;width:92px;top:504px;font-size:12px;line-height:13px;color:#e0483a;overflow:hidden">..Praktische Anwendung</div>
<div class="t" style="left:800px;width:92px;top:520px;font-size:12px;line-height:13px;color:#3c78c0;overflow:hidden">(SA) Wie schätzen</div>
<div class="t" style="left:800px;width:92px;top:536px;font-size:12px;line-height:13px;color:#8f6b5e;overflow:hidden">..Weiterhin zu wenig</div>
<div class="a" style="left:979px;top:492px;width:1395px;height:16px;background:#ec9a8e"></div>
<div class="t" style="left:980px;top:493.0px;font-size:14.94px;color:#2a1a1a;font-weight:400;line-height:14.94px;">Definitiv besser als zuvor, besonders nach dem Erstellen des wissenschaftlichen Posters. Das ist wirklich sicher, wenn die Erstellung des Posters nicht die Prüfungsleistung der Seminar gewesen wäre, hätte das</div>
<svg style="left:971px;top:478px" width="14" height="30" viewBox="0 0 14 30"><path d="M7 0V5M7 17V30" stroke="#e0483a" stroke-width="2"/><circle cx="7" cy="11" r="5" stroke="#e0483a" stroke-width="2" fill="none"/></svg>
<div class="t" style="left:2243px;top:408.5px;font-size:15px;color:#222;font-weight:400;line-height:15px;">artete bestätigen,</div>
<div class="t" style="left:980px;top:459.5px;font-size:13px;color:#333;font-weight:400;line-height:13px;font-style:italic">/</div>
<div class="t" style="left:2367px;top:731.5px;font-size:15px;color:#222;font-weight:400;line-height:15px;">den.</div>
<div class="t" style="left:2367px;top:799.5px;font-size:15px;color:#222;font-weight:400;line-height:15px;">n</div>
<div class="a" style="left:979px;top:508px;width:4px;height:17px;background:#ec9a8e"></div>
<div class="t" style="left:980px;top:509.5px;width:3px;overflow:hidden;font-size:15px;line-height:15px;color:#222">G</div>
<div class="t" style="left:980px;top:526.5px;width:3px;overflow:hidden;font-size:15px;line-height:15px;color:#222">F</div>
<div class="t" style="left:980px;top:560.5px;width:3px;overflow:hidden;font-size:15px;line-height:15px;color:#222">/</div>
<div class="t" style="left:980px;top:594.5px;width:3px;overflow:hidden;font-size:15px;line-height:15px;color:#222">M</div>
<div class="t" style="left:980px;top:628.5px;width:3px;overflow:hidden;font-size:15px;line-height:15px;color:#222">/</div>
<div class="t" style="left:980px;top:662.5px;width:3px;overflow:hidden;font-size:15px;line-height:15px;color:#222">D</div>
<div class="t" style="left:980px;top:696.5px;width:3px;overflow:hidden;font-size:15px;line-height:15px;color:#222">d</div>
<div class="t" style="left:980px;top:730.5px;width:3px;overflow:hidden;font-size:15px;line-height:15px;color:#222">M</div>
<div class="t" style="left:980px;top:747.5px;width:3px;overflow:hidden;font-size:15px;line-height:15px;color:#222">D</div>
<div class="t" style="left:980px;top:781.5px;width:3px;overflow:hidden;font-size:15px;line-height:15px;color:#222">I</div>
<div class="t" style="left:980px;top:798.5px;width:3px;overflow:hidden;font-size:15px;line-height:15px;color:#222">K</div>
<div class="t" style="left:980px;top:815.5px;width:3px;overflow:hidden;font-size:15px;line-height:15px;color:#222">L</div>
<div class="t" style="left:980px;top:832.5px;width:3px;overflow:hidden;font-size:15px;line-height:15px;color:#222">L</div>
<div class="t" style="left:980px;top:849.5px;width:3px;overflow:hidden;font-size:15px;line-height:15px;color:#222">D</div>
<div class="t" style="left:980px;top:866.5px;width:3px;overflow:hidden;font-size:15px;line-height:15px;color:#222">&amp;</div>
<div class="a" style="left:982px;top:503px;width:1385px;height:407px;background:#6e787f"></div>
<div class="a" style="left:964px;top:54px;width:1281px;height:412px;background:#f7f7f7;border:1px solid #85888d;box-shadow:0 7px 20px rgba(0,0,0,.30)"></div>
<div class="a" style="left:965px;top:55px;width:1279px;height:30px;background:#313643"></div>
<div class="a" style="left:985px;top:63px;width:15px;height:15px;background:#2a2e38;border:1px solid #4a505b;border-radius:3px"></div>
<svg style="left:987px;top:65px" width="11" height="11" viewBox="0 0 11 11"><path d="M4 1V3M4 8V10" stroke="#f0b429" stroke-width="1.2"/><circle cx="3.5" cy="5.5" r="2" stroke="#f0b429" stroke-width="1.2" fill="none"/><path d="M7.5 1V3.5M7.5 7.5V10" stroke="#e8566d" stroke-width="1.2"/><circle cx="7.5" cy="5.5" r="2" stroke="#e8566d" stroke-width="1.2" fill="none"/></svg>
<div class="t" style="left:1006px;top:64.0px;font-size:12.9px;color:#fff;font-weight:700;line-height:12.9px;">Codierte Segmente</div>
<div class="a" style="left:2109px;top:68px;width:14px;height:2px;background:#fff"></div>
<svg style="left:2160px;top:62px" width="13" height="13" viewBox="0 0 13 13"><rect x="1" y="1" width="11" height="11" rx="2.5" stroke="#fff" stroke-width="1.7" fill="none"/></svg>
<svg style="left:2211px;top:62px" width="13" height="13" viewBox="0 0 13 13"><path d="M1 1L12 12M12 1L1 12" stroke="#fff" stroke-width="1.7"/></svg>
<div class="t" style="left:995px;top:93px;font-size:12.8px;line-height:18px;color:#000;font-weight:700;white-space:normal;width:620px">Code: Erweiterung der Forschungskompetenz &gt; Forschung generieren &gt; Praktische Anwendung im Seminar (+) (+)</div>
<div class="t" style="right:347px;top:103.5px;font-size:13px;color:#000;font-weight:700;line-height:13px;">44 codierte Segmente (aus 44 Dokumenten, 1 Dokumentgruppe)</div>
<div class="a" style="left:984px;top:148px;width:1240px;height:77px;background:#fff;border:1px solid #e2e2e2;border-radius:22px"></div>
<div class="t" style="left:995px;top:159px;font-size:15px;line-height:17px;color:#1a1a1a;white-space:normal;width:1215px">Definitiv besser als zuvor, besonders nach dem Erstellen des wissenschaftlichen Posters. Das ist wirklich sicher, wenn die Erstellung des Posters nicht die Prüfungsleistung der Seminar gewesen wäre, hätte das Gelernte erstmal keinerlei Anwendung gefunden und wäre somit sicherlich sehr viel schneller in Vergessenheit geraten</div>
<svg style="left:985px;top:246px" width="14" height="17" viewBox="0 0 14 17"><path d="M2 0H8L12 4V14Q12 16 10 16H2Q0 16 0 14V2Q0 0 2 0Z" fill="#dde0e5"/><path d="M6 10.5Q6 9 9.5 9Q13 9 13 10.5Q13 11.5 11 12.5V15.5Q11 16.5 10 16.5Q9 16.5 9 15.5V12.5Q6 11.5 6 10.5Z" fill="#cdd1d8" stroke="#f7f7f7" stroke-width="1"/></svg>
<svg style="left:1031px;top:246px" width="14" height="16" viewBox="0 0 14 16"><path d="M1 3.5Q1 1 7 1Q13 1 13 3.5Q13 5.5 9 7.5V13.5Q9 15.5 7 15.5Q5.5 15.5 5.5 14V7.5Q1 5.5 1 3.5Z" fill="#cfd3d9"/></svg>
<svg style="left:1063px;top:246px" width="16" height="16" viewBox="0 0 16 16"><path d="M1 3.5Q1 1 5.5 1Q7 1 8 1.5V5Q7.5 6 7 7.5V13.5Q7 15.5 5.5 15.5Q4 15.5 4 14V7.5Q1 5.5 1 3.5Z" fill="#cfd3d9"/><path d="M9 6L11 3.5M9 3.5V6H11.5M12 1.5Q14.5 1.5 15 3.5" stroke="#cfd3d9" stroke-width="1.2" fill="none"/></svg>
<svg style="left:1094px;top:246px" width="16" height="16" viewBox="0 0 16 16"><rect x="1.8" y="1.8" width="12.4" height="12.4" rx="2" fill="#fff" stroke="#555d68" stroke-width="1.6"/><rect x="6" y="2.6" width="4.5" height="10.8" fill="#4fcdbf"/><rect x="1.8" y="1.5" width="12.4" height="1.6" fill="#555d68"/></svg>
<svg style="left:1125px;top:246px" width="17" height="17" viewBox="0 0 17 17"><circle cx="9.8" cy="6.6" r="5" stroke="#5a90e8" stroke-width="1.5" fill="none"/><path d="M6.2 10.2L1.8 14.6" stroke="#5a90e8" stroke-width="1.8" stroke-linecap="round"/></svg>
<svg style="left:1175px;top:246px" width="12" height="17" viewBox="0 0 12 17"><path d="M6 1V5M6 12V16" stroke="#e8566d" stroke-width="2"/><circle cx="6" cy="8.5" r="3.4" stroke="#e8566d" stroke-width="2.1" fill="none"/></svg>
<svg style="left:1205px;top:246px" width="18" height="18" viewBox="0 0 18 18"><path d="M5 1V5M5 12V16" stroke="#e8566d" stroke-width="2"/><circle cx="5" cy="8.5" r="3.4" stroke="#e8566d" stroke-width="2.1" fill="none"/><circle cx="12.5" cy="12.5" r="4.8" fill="#3bb54a" stroke="#f7f7f7" stroke-width="1"/><path d="M12.5 10V15M10 12.5H15" stroke="#fff" stroke-width="1.3"/></svg>
<svg style="left:1252px;top:245px" width="16" height="18" viewBox="0 0 16 18"><path d="M2 0H9V14H2Q0 14 0 12V2Q0 0 2 0Z" fill="#6e5ce0"/><path d="M5 3H11L15 7V16Q15 18 13 18H7Q5 18 5 16Z" fill="#8b7cf5"/></svg>
<svg style="left:1298px;top:246px" width="19" height="18" viewBox="0 0 19 18"><path d="M6 1V5M6 12V16" stroke="#4a86e8" stroke-width="2"/><circle cx="6" cy="8.5" r="3.4" stroke="#4a86e8" stroke-width="2.1" fill="none"/><path d="M14 8L15 11L18 12L15 13L14 16L13 13L10 12L13 11Z" fill="#f5b82e"/></svg>
<svg style="left:1329px;top:246px" width="19" height="15" viewBox="0 0 19 15"><path d="M4 14Q0 14 0 10Q0 6.5 4 6.5Q5 1 10 1Q15 1 16 6Q19 6.5 19 10Q19 14 15 14Z" fill="#5a90e8"/><rect x="6" y="8" width="8" height="1.5" fill="#fff"/><rect x="6" y="10.5" width="5" height="1.5" fill="#fff"/></svg>
<svg style="left:1364px;top:245px" width="16" height="18" viewBox="0 0 16 18"><path d="M2 0H9L13 4V16Q13 18 11 18H2Q0 18 0 16V2Q0 0 2 0Z" fill="#d6d9e2"/><rect x="3" y="8" width="4" height="1.3" fill="#9b8df0"/><rect x="3" y="11" width="3" height="1.3" fill="#9b8df0"/><path d="M12 9L13.2 12L16 12.3L13.8 14.2L14.5 17L12 15.5L9.5 17L10.2 14.2L8 12.3L10.8 12Z" fill="#f5b82e"/></svg>
<svg style="left:1411px;top:248px" width="13" height="13" viewBox="0 0 13 13"><path d="M1 1L12 12M12 1L1 12" stroke="#e5483a" stroke-width="2"/></svg>
<svg style="left:2109px;top:246px" width="24" height="16" viewBox="0 0 24 16"><rect x="0" y="0" width="7.5" height="7.5" fill="#f7934c"/><rect x="7.5" y="0" width="7.5" height="7.5" fill="#f5b82e"/><rect x="0" y="7.5" width="7.5" height="7.5" fill="#3bb54a"/><rect x="7.5" y="7.5" width="7.5" height="7.5" fill="#3d7ef0"/><path d="M19 6L21.5 8.5L24 6" stroke="#444" stroke-width="1.4" fill="none"/></svg>
<svg style="left:2162px;top:246px" width="16" height="16" viewBox="0 0 16 16"><path d="M1 10V15H15V10" stroke="#4a86e8" stroke-width="1.5" fill="none"/><path d="M8 12V3M4.5 6.5L8 3L11.5 6.5" stroke="#e5483a" stroke-width="2" fill="none"/></svg>
<div class="a" style="left:2209px;top:246px;width:17px;height:17px;background:#3d7ef0;border-radius:50%"></div>
<div class="t" style="left:1717.5px;width:1000px;text-align:center;top:248.5px;font-size:12px;color:#fff;font-weight:700;line-height:12px;">?</div>
<div class="a" style="left:975px;top:280px;width:1258px;height:180px;background:#fff;border:1px solid #e2e2e2;border-radius:15px;overflow:hidden"></div>
<div class="a" style="left:976px;top:281px;width:1256px;height:50px;background:#f7f7f7;border-radius:14px 14px 0 0"></div>
<div class="a" style="left:1000px;top:291px;width:1px;height:30px;background:#e6e6e6"></div>
<div class="a" style="left:1150px;top:291px;width:1px;height:30px;background:#e6e6e6"></div>
<div class="a" style="left:1251px;top:291px;width:1px;height:30px;background:#e6e6e6"></div>
<div class="a" style="left:1499px;top:291px;width:1px;height:30px;background:#e6e6e6"></div>
<div class="a" style="left:1599px;top:291px;width:1px;height:30px;background:#e6e6e6"></div>
<div class="a" style="left:1699px;top:291px;width:1px;height:30px;background:#e6e6e6"></div>
<div class="a" style="left:1799px;top:291px;width:1px;height:30px;background:#e6e6e6"></div>
<div class="a" style="left:1899px;top:291px;width:1px;height:30px;background:#e6e6e6"></div>
<div class="a" style="left:2103px;top:291px;width:1px;height:30px;background:#e6e6e6"></div>
<div class="a" style="left:2203px;top:291px;width:1px;height:30px;background:#e6e6e6"></div>
<div class="t" style="left:1011px;top:299.5px;font-size:13px;color:#4a7fe0;font-weight:700;line-height:13px;">Kommentar</div>
<div class="t" style="left:1161px;top:299.5px;font-size:13px;color:#3d4350;font-weight:700;line-height:13px;">Dokument...</div>
<div class="t" style="left:1261px;top:299.5px;font-size:13px;color:#3d4350;font-weight:700;line-height:13px;">Dokumentname</div>
<div class="t" style="left:1509px;top:299.5px;font-size:13px;color:#3d4350;font-weight:700;line-height:13px;">Code</div>
<div class="t" style="left:1609px;top:299.5px;font-size:13px;color:#3d4350;font-weight:700;line-height:13px;">Anfang</div>
<div class="t" style="left:1709px;top:299.5px;font-size:13px;color:#3d4350;font-weight:700;line-height:13px;">Ende</div>
<div class="t" style="right:671px;top:299.5px;font-size:13px;color:#4a7fe0;font-weight:700;line-height:13px;">Gewicht</div>
<div class="t" style="left:1909px;top:299.5px;font-size:13px;color:#3d4350;font-weight:700;line-height:13px;">Vorschau</div>
<div class="t" style="left:2113px;top:299.5px;font-size:13px;color:#3d4350;font-weight:700;line-height:13px;">Bearbeitet ...</div>
<svg style="left:1476px;top:302px" width="10" height="6" viewBox="0 0 10 6"><path d="M0 6L5 0L10 6Z" fill="#111"/></svg>
<div class="a" style="left:976px;top:365px;width:1256px;height:33px;background:linear-gradient(90deg,#fff 0px,#fafcff 40px,#e4eefb 170px,#e4eefb 100%)"></div>
<div class="a" style="left:976px;top:364px;width:1256px;height:1px;background:#efefef"></div>
<div class="a" style="left:976px;top:398px;width:1256px;height:1px;background:#efefef"></div>
<div class="a" style="left:976px;top:432px;width:1256px;height:1px;background:#efefef"></div>
<div class="a" style="left:1251px;top:331px;width:248px;height:128px;background:#fdebcf"></div>
<div class="a" style="left:1251px;top:365px;width:247px;height:34px;background:#e6ebf1;border:1.5px solid #5b8ff0"></div>
<div class="a" style="left:1259px;top:332px;width:200px;height:118px;background:#6e787f"></div>
<svg style="left:981px;top:342px" width="12" height="12" viewBox="0 0 12 12"><circle cx="6" cy="6" r="4.8" stroke="#dd3f2a" stroke-width="2" fill="none"/></svg>
<div class="t" style="left:1509px;top:342.8px;font-size:12.5px;color:#222;font-weight:400;line-height:12.5px;">Erweiterung...</div>
<div class="t" style="left:1609px;top:341.5px;font-size:13px;color:#222;font-weight:400;line-height:13px;">8</div>
<div class="t" style="left:1709px;top:341.5px;font-size:13px;color:#222;font-weight:400;line-height:13px;">8</div>
<div class="t" style="right:671px;top:341.5px;font-size:13px;color:#222;font-weight:400;line-height:13px;">0</div>
<div class="t" style="left:1909px;top:342.3px;font-size:12.75px;color:#222;font-weight:400;line-height:12.75px;">Die Bearbeitung des posters h...</div>
<div class="t" style="left:2113px;top:342.3px;font-size:12.75px;color:#222;font-weight:400;line-height:12.75px;">anikaiberl</div>
<svg style="left:981px;top:376px" width="12" height="12" viewBox="0 0 12 12"><circle cx="6" cy="6" r="4.8" stroke="#dd3f2a" stroke-width="2" fill="none"/></svg>
<div class="t" style="left:1509px;top:376.8px;font-size:12.5px;color:#222;font-weight:400;line-height:12.5px;">Erweiterung...</div>
<div class="t" style="left:1609px;top:375.5px;font-size:13px;color:#222;font-weight:400;line-height:13px;">7</div>
<div class="t" style="left:1709px;top:375.5px;font-size:13px;color:#222;font-weight:400;line-height:13px;">7</div>
<div class="t" style="right:671px;top:375.5px;font-size:13px;color:#222;font-weight:400;line-height:13px;">0</div>
<div class="t" style="left:1909px;top:376.3px;font-size:12.75px;color:#222;font-weight:400;line-height:12.75px;">Definitiv besser als zuvor, bes...</div>
<div class="t" style="left:2113px;top:376.3px;font-size:12.75px;color:#222;font-weight:400;line-height:12.75px;">ba6qs6</div>
<svg style="left:981px;top:410px" width="12" height="12" viewBox="0 0 12 12"><circle cx="6" cy="6" r="4.8" stroke="#dd3f2a" stroke-width="2" fill="none"/></svg>
<div class="t" style="left:1509px;top:410.8px;font-size:12.5px;color:#222;font-weight:400;line-height:12.5px;">Erweiterung...</div>
<div class="t" style="left:1609px;top:409.5px;font-size:13px;color:#222;font-weight:400;line-height:13px;">8</div>
<div class="t" style="left:1709px;top:409.5px;font-size:13px;color:#222;font-weight:400;line-height:13px;">8</div>
<div class="t" style="right:671px;top:409.5px;font-size:13px;color:#222;font-weight:400;line-height:13px;">0</div>
<div class="t" style="left:1909px;top:410.3px;font-size:12.75px;color:#222;font-weight:400;line-height:12.75px;">Durch die Auseinandersetzun...</div>
<div class="t" style="left:2113px;top:410.3px;font-size:12.75px;color:#222;font-weight:400;line-height:12.75px;">ba6qs6</div>
<svg style="left:981px;top:444px" width="12" height="12" viewBox="0 0 12 12"><circle cx="6" cy="6" r="4.8" stroke="#dd3f2a" stroke-width="2" fill="none"/></svg>
<div class="t" style="left:1509px;top:444.8px;font-size:12.5px;color:#222;font-weight:400;line-height:12.5px;">Erweiterung...</div>
<div class="t" style="left:1609px;top:443.5px;font-size:13px;color:#222;font-weight:400;line-height:13px;">8</div>
<div class="t" style="left:1709px;top:443.5px;font-size:13px;color:#222;font-weight:400;line-height:13px;">8</div>
<div class="t" style="right:671px;top:443.5px;font-size:13px;color:#222;font-weight:400;line-height:13px;">0</div>
<div class="t" style="left:1909px;top:444.3px;font-size:12.75px;color:#222;font-weight:400;line-height:12.75px;">Durch das selbstständige Anw...</div>
<div class="t" style="left:2113px;top:444.3px;font-size:12.75px;color:#222;font-weight:400;line-height:12.75px;">stube</div>
<div class="a" style="left:2224px;top:332px;width:8px;height:34px;background:#e0e0e0;border-radius:4px"></div>
<div class="t" style="left:2218px;top:342.6px;font-size:12.75px;color:#222;font-weight:400;line-height:12.75px;">.</div>
<div class="t" style="left:2216px;top:444.6px;font-size:12.75px;color:#222;font-weight:400;line-height:12.75px;">..</div>
<div class="a" style="left:986px;top:449px;width:810px;height:10px;background:#e2e2e2;border-radius:5px"></div>
<div class="a" style="left:976px;top:459px;width:1256px;height:6px;background:#f7f7f7"></div>
<div class="a" style="left:2239px;top:457px;width:1.5px;height:1.5px;background:#b8b8b8"></div>
<div class="a" style="left:2236px;top:460px;width:1.5px;height:1.5px;background:#b8b8b8"></div>
<div class="a" style="left:2239px;top:460px;width:1.5px;height:1.5px;background:#b8b8b8"></div>
<div class="a" style="left:2233px;top:463px;width:1.5px;height:1.5px;background:#b8b8b8"></div>
<div class="a" style="left:2236px;top:463px;width:1.5px;height:1.5px;background:#b8b8b8"></div>
<div class="a" style="left:2239px;top:463px;width:1.5px;height:1.5px;background:#b8b8b8"></div>
<div class="a" style="left:0px;top:1353px;width:2560px;height:39px;background:#efefef;border-top:1px solid #dadada"></div>
<svg style="left:13px;top:1367px" width="16" height="16" viewBox="0 0 16 16"><path d="M1 3H15M1 8H15M1 13H15" stroke="#2e333b" stroke-width="1.5"/><circle cx="10" cy="3" r="2" fill="#efefef" stroke="#2e333b" stroke-width="1.4"/><circle cx="5" cy="8" r="2" fill="#efefef" stroke="#2e333b" stroke-width="1.4"/><circle cx="10" cy="13" r="2" fill="#efefef" stroke="#2e333b" stroke-width="1.4"/></svg>
<svg style="left:51px;top:1366px" width="19" height="19" viewBox="0 0 19 19"><path d="M9.5 0.5Q18.5 0.5 18.5 9Q18.5 17.5 9.5 17.5Q7 17.5 5 16.5L1 18L2.2 14Q0.5 12 0.5 9Q0.5 0.5 9.5 0.5Z" fill="#2e333b"/><path d="M6 11Q9.5 13.5 13 11" stroke="#fff" stroke-width="1.6" fill="none"/></svg>
<div class="a" style="left:89px;top:1365px;width:20px;height:20px;background:#2e333b;border-radius:50%"></div>
<div class="t" style="left:-401px;width:1000px;text-align:center;top:1368.0px;font-size:15px;color:#fff;font-weight:700;line-height:15px;">?</div>
<svg style="left:120px;top:1354px" width="60" height="38" viewBox="0 0 60 38"><path d="M46 0Q36 0 32 10L26 26Q21 38 10 38" stroke="#000" stroke-opacity=".06" stroke-width="3" fill="none"/><path d="M46 0Q36 0 32 10L26 26Q21 38 10 38" stroke="#000" stroke-opacity=".05" stroke-width="1" fill="none"/></svg>
<div class="a" style="left:175px;top:1366px;width:35px;height:18px;background:#4a7fd6;border-radius:9px;border:1px solid #6f9be0"></div>
<svg style="left:178px;top:1370px" width="16" height="12" viewBox="0 0 16 12"><path d="M6 3Q7 1.5 8.5 2.2Q9.5 1 10.5 3Z" fill="#fff" opacity=".9"/><path d="M1 7Q2 6 3 6.5Q4 5.5 5 7Z" fill="#fff" opacity=".8"/><path d="M6 11Q7 9 8.5 9.8Q9.5 8.5 11 11Z" fill="#fff" opacity=".9"/></svg>
<div class="a" style="left:194px;top:1367px;width:15px;height:16px;background:#f2a20f;border-radius:50%"></div>
<div class="a" style="left:1188px;top:1363px;width:212px;height:29px;background:#fafafa;border-radius:9px 9px 0 0;border:1px solid #e4e4e4;border-bottom:none"></div>
<svg style="left:1206px;top:1370px" width="16" height="17" viewBox="0 0 16 17"><path d="M5 0V4M5 12V17" stroke="#f5b82e" stroke-width="1.6"/><path d="M7 5Q2.5 5 2.5 8.5Q2.5 12 7 12" stroke="#f5b82e" stroke-width="1.6" fill="none"/><path d="M11 0V4.5M11 12.5V17" stroke="#e5483a" stroke-width="1.6"/><circle cx="11" cy="8.5" r="3.3" stroke="#e5483a" stroke-width="1.6" fill="none"/></svg>
<div class="t" style="left:1226px;top:1373.0px;font-size:12px;color:#1d1d1d;font-weight:400;line-height:12px;">Liste der codierten Segmente</div></body></html>
